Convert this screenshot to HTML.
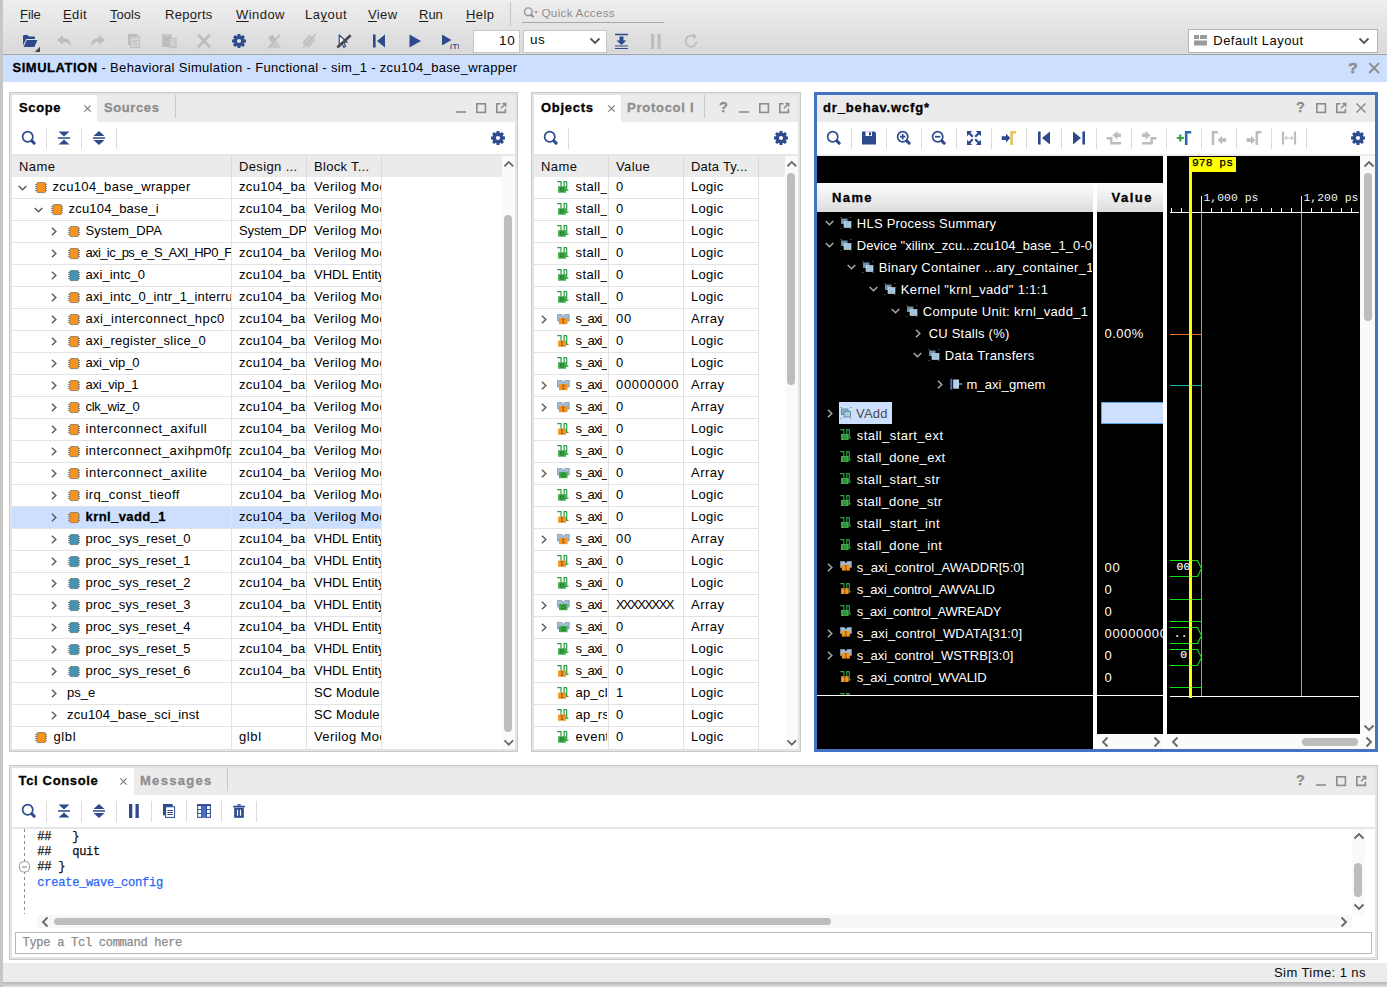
<!DOCTYPE html>
<html><head><meta charset="utf-8"><title>Vivado Simulation</title>
<style>
html,body{margin:0;padding:0;background:#fff}
body{width:1387px;height:987px;position:relative;overflow:hidden;font-family:'Liberation Sans',sans-serif}
div,svg{position:absolute;display:block}
div div,div svg{position:absolute}
u{text-decoration:underline;text-underline-offset:1.500px}
</style></head>
<body>
<svg width="0" height="0" style="left:0;top:0"><defs>
<symbol id="gear" viewBox="0 0 16 16"><path fill="#2c4a8c" fill-rule="evenodd" d="M6.315 3.081L6.589 1.042L9.411 1.042L9.685 3.081L10.287 3.330L11.923 2.082L13.918 4.077L12.670 5.713L12.919 6.315L14.958 6.589L14.958 9.411L12.919 9.685L12.670 10.287L13.918 11.923L11.923 13.918L10.287 12.670L9.685 12.919L9.411 14.958L6.589 14.958L6.315 12.919L5.713 12.670L4.077 13.918L2.082 11.923L3.330 10.287L3.081 9.685L1.042 9.411L1.042 6.589L3.081 6.315L3.330 5.713L2.082 4.077L4.077 2.082L5.713 3.330zM5.900 8a2.100 2.100 0 1 0 4.200 0a2.100 2.100 0 1 0 -4.200 0z"/></symbol>
<symbol id="search" viewBox="0 0 16 16"><circle cx="6.700" cy="6.700" r="5.100" fill="none" stroke="#2c4a8c" stroke-width="1.700"/><path d="M11.100 11.100l2.100 2.100" stroke="#2c4a8c" stroke-width="3" stroke-linecap="round"/></symbol>
<symbol id="collapse" viewBox="0 0 16 16"><path fill="#2c4a8c" d="M2.500 1.500h11L8 6.500zM2 7.300h12v1.500H2zM8 9.600l5.500 5h-11z"/></symbol>
<symbol id="expand" viewBox="0 0 16 16"><path fill="#2c4a8c" d="M8 1l5.500 5h-11zM2 7.300h12v1.500H2zM2.500 10h11L8 15z"/></symbol>
<symbol id="wmin" viewBox="0 0 12 12"><path d="M1 10h10" stroke="#8c8c8c" stroke-width="1.600"/></symbol>
<symbol id="wmax" viewBox="0 0 12 12"><rect x="1.800" y="1.800" width="8.600" height="8.600" fill="none" stroke="#8c8c8c" stroke-width="1.600"/></symbol>
<symbol id="wpop" viewBox="0 0 12 12"><path d="M5.500 1.800H1.800v8.600h8.600V6.800" fill="none" stroke="#8c8c8c" stroke-width="1.600"/><path d="M6 6.200L10.600 1.600M7.400 1.500h3.300v3.300" fill="none" stroke="#8c8c8c" stroke-width="1.500"/></symbol>
<symbol id="wx" viewBox="0 0 12 12"><path d="M1.500 1.500l9 9M10.500 1.500l-9 9" stroke="#8c8c8c" stroke-width="1.500"/></symbol>
<symbol id="tabx" viewBox="0 0 10 10"><path d="M1.500 1.500l7 7M8.500 1.500l-7 7" stroke="#777" stroke-width="1.200"/></symbol>
<symbol id="chR" viewBox="0 0 6 9"><path d="M0.900 0.700L4.800 4.500 0.900 8.300" fill="none" stroke="#5e5e5e" stroke-width="1.500"/></symbol>
<symbol id="chD" viewBox="0 0 9 6"><path d="M0.700 0.900L4.500 4.800 8.300 0.900" fill="none" stroke="#5e5e5e" stroke-width="1.500"/></symbol>
<symbol id="chRw" viewBox="0 0 6 9"><path d="M0.900 0.700L4.800 4.500 0.900 8.300" fill="none" stroke="#a8a8a8" stroke-width="1.500"/></symbol>
<symbol id="chDw" viewBox="0 0 9 6"><path d="M0.700 0.900L4.500 4.800 8.300 0.900" fill="none" stroke="#a8a8a8" stroke-width="1.500"/></symbol>
<symbol id="sbU" viewBox="0 0 12 8"><path d="M1.500 6.500L6 2 10.500 6.500" fill="none" stroke="#6a6a6a" stroke-width="1.900"/></symbol>
<symbol id="sbD" viewBox="0 0 12 8"><path d="M1.500 1.500L6 6 10.500 1.500" fill="none" stroke="#6a6a6a" stroke-width="1.900"/></symbol>
<symbol id="sbL" viewBox="0 0 8 12"><path d="M6.500 1.500L2 6 6.500 10.500" fill="none" stroke="#6a6a6a" stroke-width="1.900"/></symbol>
<symbol id="sbR" viewBox="0 0 8 12"><path d="M1.500 1.500L6 6 1.500 10.500" fill="none" stroke="#6a6a6a" stroke-width="1.900"/></symbol>
<symbol id="modO" viewBox="0 0 12 12"><path d="M0 2.500h12M0 4.500h12M0 6.500h12M0 8.500h12" stroke="#8a8a8a" stroke-width="1" stroke-dasharray="1.800 8.600 1.800"/><rect x="1.900" y="0.600" width="8.600" height="10" rx="1" fill="#f7941e" stroke="#8a7a66" stroke-width="0.900"/></symbol>
<symbol id="modB" viewBox="0 0 12 12"><path d="M0 2.500h12M0 4.500h12M0 6.500h12M0 8.500h12" stroke="#8a8a8a" stroke-width="1" stroke-dasharray="1.800 8.600 1.800"/><rect x="1.900" y="0.600" width="8.600" height="10" rx="1" fill="#3f95b3" stroke="#6a7f88" stroke-width="0.900"/></symbol>
<symbol id="sigO" viewBox="0 0 12 12"><path d="M0.200 0.700H4V6M6.400 0.700H10M7.100 0.700V6M9.700 0.700V9.300H11.500" fill="none" stroke="#2f9e44" stroke-width="1.200"/><rect x="1.100" y="5.200" width="7.900" height="6.500" fill="#3fae49"/><circle cx="4.900" cy="8.600" r="1.700" fill="none" stroke="#2c7a36" stroke-width="1.100"/></symbol>
<symbol id="sigI" viewBox="0 0 12 12"><path d="M0.200 0.700H4V6M6.400 0.700H10M7.100 0.700V6M9.700 0.700V9.300H11.500" fill="none" stroke="#2f9e44" stroke-width="1.200"/><rect x="1.100" y="5.500" width="7.900" height="6.300" fill="#f7941e"/><path d="M3.800 6.800h2.400M5 6.800v3.400M3.800 10.400h2.400" stroke="#8a5a1e" stroke-width="1"/></symbol>
<symbol id="arrI" viewBox="0 0 13 11"><path d="M0.400 0.400H4.600L6.300 2.600 8 0.400H12.200V7H0.400z" fill="#9fc0dc" stroke="#7f8fa0" stroke-width="0.800"/><rect x="2" y="3.900" width="8.500" height="6.300" fill="#f7941e"/><path d="M5.100 5.200h2.400M6.300 5.200v3.400M5.100 8.800h2.400" stroke="#8a5a1e" stroke-width="1"/></symbol>
<symbol id="arrO" viewBox="0 0 13 11"><path d="M0.400 0.400H4.600L6.300 2.600 8 0.400H12.200V7H0.400z" fill="#9fc0dc" stroke="#7f8fa0" stroke-width="0.800"/><rect x="2" y="3.900" width="8.500" height="6.300" fill="#3fae49"/><circle cx="6.300" cy="7.100" r="1.700" fill="none" stroke="#2c7a36" stroke-width="1.100"/></symbol>
<symbol id="grp" viewBox="0 0 12 12"><path d="M0.500 0.500h1M10.500 0.500h1M0.500 11.500h1M10.500 11.500h1" stroke="#777" stroke-width="1"/><rect x="1" y="1.500" width="6.500" height="5.500" fill="#6f8fa6"/><rect x="4" y="4.500" width="7" height="6" fill="#9fc4dc" stroke="#cfe3ef" stroke-width="0.600"/></symbol>
</defs></svg>
<div style="left:0px;top:0px;width:1387px;height:54px;background:linear-gradient(#eeeeee,#e4e4e4 50%,#d9d9d9 96%,#e2dede);"></div>
<div style="left:0px;top:54px;width:1387px;height:1px;background:#a3a3a3;"></div>
<div style="left:20.00px;top:6.00px;font:13px/17px 'Liberation Sans',sans-serif;color:#1c1c1c;letter-spacing:-0.050px;white-space:pre;"><u>F</u>ile</div>
<div style="left:63.00px;top:6.00px;font:13px/17px 'Liberation Sans',sans-serif;color:#1c1c1c;letter-spacing:0.402px;white-space:pre;"><u>E</u>dit</div>
<div style="left:110.00px;top:6.00px;font:13px/17px 'Liberation Sans',sans-serif;color:#1c1c1c;letter-spacing:0.039px;white-space:pre;"><u>T</u>ools</div>
<div style="left:165.00px;top:6.00px;font:13px/17px 'Liberation Sans',sans-serif;color:#1c1c1c;letter-spacing:0.291px;white-space:pre;">Rep<u>o</u>rts</div>
<div style="left:236.00px;top:6.00px;font:13px/17px 'Liberation Sans',sans-serif;color:#1c1c1c;letter-spacing:0.441px;white-space:pre;"><u>W</u>indow</div>
<div style="left:305.00px;top:6.00px;font:13px/17px 'Liberation Sans',sans-serif;color:#1c1c1c;letter-spacing:0.519px;white-space:pre;">La<u>y</u>out</div>
<div style="left:368.00px;top:6.00px;font:13px/17px 'Liberation Sans',sans-serif;color:#1c1c1c;letter-spacing:0.370px;white-space:pre;"><u>V</u>iew</div>
<div style="left:419.00px;top:6.00px;font:13px/17px 'Liberation Sans',sans-serif;color:#1c1c1c;letter-spacing:-0.025px;white-space:pre;"><u>R</u>un</div>
<div style="left:466.00px;top:6.00px;font:13px/17px 'Liberation Sans',sans-serif;color:#1c1c1c;letter-spacing:0.382px;white-space:pre;"><u>H</u>elp</div>
<div style="left:510px;top:2px;width:1px;height:24px;background:#c4c4c4;"></div>
<svg style="left:523px;top:6px;" width="16" height="14" viewBox="0 0 16 14"><circle cx="5.300" cy="5.800" r="3.900" fill="none" stroke="#969696" stroke-width="1.400"/><path d="M8 8.600l2 2" stroke="#8c8c8c" stroke-width="2" stroke-linecap="round"/><path d="M11.300 5.300h3.600l-1.800 2.100z" fill="#8c8c8c"/></svg>
<div style="left:541.50px;top:5.15px;font:11.7px/15px 'Liberation Sans',sans-serif;color:#8f8f8f;letter-spacing:0.274px;white-space:pre;">Quick Access</div>
<div style="left:522px;top:22px;width:142px;height:1px;background:#a8a8a8;"></div>
<svg style="left:21px;top:33px;" width="20" height="19" viewBox="0 0 20 19"><path d="M2 3.300q0-1.300 1.300-1.300h3.200l1.500 1.500h4.700q1.300 0 1.300 1.300V6H5.300L2 12.500z" fill="#2c4a8c"/><path d="M5.800 7H16.400l-3 7H2.600z" fill="#2c4a8c"/><path d="M13.800 19H19v-5.200z" fill="#444"/></svg>
<svg style="left:56px;top:34px;" width="16" height="14" viewBox="0 0 16 14"><path d="M1 6l6-5v3.200c5 0 8 2.500 8 8.500-1.500-3.500-4-4.800-8-4.800V11z" fill="#bdbdbd"/></svg>
<svg style="left:90px;top:34px;" width="16" height="14" viewBox="0 0 16 14"><path d="M15 6L9 1v3.200c-5 0-8 2.500-8 8.500 1.500-3.500 4-4.800 8-4.800V11z" fill="#bdbdbd"/></svg>
<svg style="left:126px;top:33px;" width="16" height="16" viewBox="0 0 16 16"><rect x="2" y="1" width="9.700" height="11.300" fill="#bdbdbd"/><rect x="4.600" y="3.800" width="9" height="10.600" fill="#d6d6d6" stroke="#bdbdbd" stroke-width="1"/><path d="M6.400 7.500h5.500M6.400 9.500h5.500M6.400 11.500h5.500" stroke="#bdbdbd" stroke-width="0.900"/></svg>
<svg style="left:161px;top:33px;" width="16" height="16" viewBox="0 0 16 16"><rect x="1.200" y="1.100" width="9.400" height="12.900" fill="#bdbdbd"/><rect x="3.200" y="1.800" width="5.400" height="1.100" fill="#dadada"/><rect x="8.800" y="5.300" width="6.300" height="9.300" fill="#cfcfcf" stroke="#bdbdbd" stroke-width="1"/></svg>
<svg style="left:196px;top:33px;" width="16" height="16" viewBox="0 0 16 16"><path d="M2 1.600l12 12.600M14 1.600L2 14.200" stroke="#bdbdbd" stroke-width="2.700"/></svg>
<svg style="left:231px;top:33px;" width="16" height="16"><use href="#gear"/></svg>
<svg style="left:266px;top:33px;" width="16" height="16" viewBox="0 0 16 16"><path d="M2 4.500l4.500-3 4 5.500-4.500 3z" fill="#bdbdbd"/><path d="M1.500 15h13.500l-4.200-7.500z" fill="#c9c9c9"/><path d="M2.500 14.800L14 1.800" stroke="#bdbdbd" stroke-width="1.600"/></svg>
<svg style="left:301px;top:33px;" width="16" height="16" viewBox="0 0 16 16"><path d="M2.500 9.500l6-7 5 4.500-6 7z" fill="#d0d0d0" stroke="#bdbdbd" stroke-width="1.200"/><path d="M5 9.500l3.500 3M6.500 7.800l3.500 3M8 6l3.500 3" stroke="#bdbdbd" stroke-width="0.900"/><path d="M2 14.500L14.500 1.500" stroke="#bdbdbd" stroke-width="1.600"/></svg>
<svg style="left:335px;top:33px;" width="18" height="16" viewBox="0 0 18 16"><path d="M4.200 2v10.200l2.600-2.300 2 4.400 1.800-0.800-2-4.300h3.600z" fill="#fff" stroke="#2c4a8c" stroke-width="1.200" stroke-linejoin="round"/><path d="M2.300 14.600L15.700 2.200" stroke="#4a4a4a" stroke-width="2.700"/></svg>
<svg style="left:372px;top:34px;" width="14" height="14" viewBox="0 0 14 14"><rect x="1" y="0.500" width="2.600" height="13" fill="#2c4a8c"/><path d="M13 0.500v13L5 7z" fill="#2c4a8c"/></svg>
<svg style="left:407.5px;top:34px;" width="14" height="14" viewBox="0 0 14 14"><path d="M1.500 0.500L13 7 1.500 13.500z" fill="#2c4a8c"/></svg>
<svg style="left:441px;top:34px;" width="18" height="15" viewBox="0 0 18 15"><path d="M1 0.500L10.500 6 1 11.500z" fill="#2c4a8c"/><text x="9" y="14.500" font-family="Liberation Sans" font-size="7" font-weight="bold" letter-spacing="0.300" fill="#2c4a8c">(T)</text></svg>
<div style="left:473px;top:30px;width:47px;height:23px;background:#fff;border:1px solid #c6c6c6;box-sizing:border-box;"></div>
<div style="left:499.00px;top:32.32px;font:13.5px/18px 'Liberation Sans',sans-serif;color:#0a0a0a;letter-spacing:0.764px;white-space:pre;">10</div>
<div style="left:523px;top:30px;width:84px;height:23px;background:#fff;border:1px solid #c6c6c6;box-sizing:border-box;"></div>
<div style="left:530.00px;top:31.32px;font:13.5px/18px 'Liberation Sans',sans-serif;color:#0a0a0a;letter-spacing:0.378px;white-space:pre;">us</div>
<svg style="left:589px;top:37px;" width="12" height="8" viewBox="0 0 12 8"><path d="M1.500 1.500L6 6 10.500 1.500" fill="none" stroke="#555" stroke-width="1.900"/></svg>
<svg style="left:614px;top:33px;" width="16" height="16" viewBox="0 0 16 16"><path d="M1 1.500h13" stroke="#2c4a8c" stroke-width="1.500"/><path d="M5.500 3.500h4v4h3L7.500 12 2.500 7.500h3z" fill="#2c4a8c"/><path d="M1 13h13M1 15.500h13" stroke="#2c4a8c" stroke-width="1.200"/></svg>
<svg style="left:650px;top:34px;" width="12" height="15" viewBox="0 0 12 15"><rect x="1" y="0" width="3.200" height="15" fill="#bdbdbd"/><rect x="7.500" y="0" width="3.200" height="15" fill="#bdbdbd"/></svg>
<svg style="left:683px;top:33px;" width="16" height="16" viewBox="0 0 16 16"><path d="M13.500 8.500A5.500 5.500 0 1 1 11 3.600" fill="none" stroke="#bdbdbd" stroke-width="1.800"/><path d="M9.500 0.500l4.500 2.500-3.500 3.500z" fill="#bdbdbd"/></svg>
<div style="left:1188px;top:29px;width:190px;height:24px;background:#fff;border:1px solid #b4b4b4;box-sizing:border-box;"></div>
<svg style="left:1194px;top:35px;" width="14" height="12" viewBox="0 0 14 12"><rect x="0" y="0" width="5" height="4" fill="#9a9a9a"/><rect x="6" y="0" width="7" height="4" fill="#9a9a9a"/><rect x="0" y="5.500" width="13" height="5" fill="#9a9a9a"/></svg>
<div style="left:1213.30px;top:32.00px;font:13px/17px 'Liberation Sans',sans-serif;color:#0a0a0a;letter-spacing:0.462px;white-space:pre;">Default Layout</div>
<svg style="left:1358px;top:37px;" width="12" height="8" viewBox="0 0 12 8"><path d="M1.500 1.500L6 6 10.500 1.500" fill="none" stroke="#555" stroke-width="1.900"/></svg>
<div style="left:0px;top:55px;width:1387px;height:27px;background:#cddffe;"></div>
<div style="left:12.50px;top:59.00px;font:bold 13px/17px 'Liberation Sans',sans-serif;color:#000;letter-spacing:0.516px;white-space:pre;-webkit-text-stroke:0.300px currentColor;">SIMULATION</div>
<div style="left:101.50px;top:59.00px;font:13px/17px 'Liberation Sans',sans-serif;color:#000;letter-spacing:0.325px;white-space:pre;">- Behavioral Simulation - Functional - sim_1 - zcu104_base_wrapper</div>
<div style="left:1348.30px;top:57.63px;font:bold 15.5px/20px 'Liberation Sans',sans-serif;color:#8c8c8c;letter-spacing:1.531px;white-space:pre;-webkit-text-stroke:0.500px currentColor;">?</div>
<svg style="left:1368px;top:62px;" width="12" height="12" viewBox="0 0 12 12"><path d="M1.200 1.200l9.800 9.800M11 1.200L1.200 11" stroke="#8c8c8c" stroke-width="1.900"/></svg>
<div style="left:9px;top:92px;width:509px;height:660px;background:#c9c9c9;"></div>
<div style="left:10px;top:93px;width:507px;height:658px;background:#e4e4e4;"></div>
<div style="left:12px;top:95px;width:503px;height:654px;background:#fff;"></div>
<div style="left:12px;top:95px;width:503px;height:27px;background:#ebebeb;"></div>
<div style="left:12px;top:95px;width:85px;height:27px;background:#fff;"></div>
<div style="left:19.00px;top:99.00px;font:bold 13px/17px 'Liberation Sans',sans-serif;color:#000;letter-spacing:0.613px;white-space:pre;-webkit-text-stroke:0.300px currentColor;">Scope</div>
<svg style="left:82.5px;top:104.2px;" width="9" height="9"><use href="#tabx"/></svg>
<div style="left:104.00px;top:99.00px;font:bold 13px/17px 'Liberation Sans',sans-serif;color:#8e8e8e;letter-spacing:0.603px;white-space:pre;-webkit-text-stroke:0.300px currentColor;">Sources</div>
<div style="left:175px;top:95px;width:1px;height:23px;background:#c9c9c9;"></div>
<svg style="left:455px;top:102px;" width="12" height="12"><use href="#wmin"/></svg>
<svg style="left:475px;top:102px;" width="12" height="12"><use href="#wmax"/></svg>
<svg style="left:495px;top:102px;" width="12" height="12"><use href="#wpop"/></svg>
<svg style="left:21px;top:130px;" width="16" height="16"><use href="#search"/></svg>
<svg style="left:56px;top:130px;" width="16" height="16"><use href="#collapse"/></svg>
<svg style="left:91px;top:130px;" width="16" height="16"><use href="#expand"/></svg>
<div style="left:46px;top:128px;width:1px;height:21px;background:#dcdcdc;"></div>
<div style="left:81px;top:128px;width:1px;height:21px;background:#dcdcdc;"></div>
<div style="left:116px;top:128px;width:1px;height:21px;background:#dcdcdc;"></div>
<svg style="left:490px;top:130px;" width="16" height="16"><use href="#gear"/></svg>
<div style="left:12px;top:154px;width:490px;height:23px;background:#ebebeb;"></div>
<div style="left:231px;top:154px;width:1px;height:23px;background:#dadada;"></div>
<div style="left:306px;top:154px;width:1px;height:23px;background:#dadada;"></div>
<div style="left:381px;top:154px;width:1px;height:23px;background:#dadada;"></div>
<div style="left:19.00px;top:158.00px;font:13px/17px 'Liberation Sans',sans-serif;color:#0a0a0a;letter-spacing:0.475px;white-space:pre;">Name</div>
<div style="left:239.00px;top:158.00px;font:13px/17px 'Liberation Sans',sans-serif;color:#0a0a0a;letter-spacing:0.366px;white-space:pre;">Design ...</div>
<div style="left:314.00px;top:158.00px;font:13px/17px 'Liberation Sans',sans-serif;color:#0a0a0a;letter-spacing:0.290px;white-space:pre;">Block T...</div>
<div style="left:12px;top:198px;width:370px;height:1px;background:#e3e3e3;"></div>
<svg style="left:17.5px;top:184.8px;" width="9" height="6"><use href="#chD"/></svg>
<svg style="left:35px;top:181.5px;" width="12" height="12"><use href="#modO"/></svg>
<div style="left:52.50px;top:178.00px;font:13px/17px 'Liberation Sans',sans-serif;color:#000;letter-spacing:0.345px;white-space:pre;width:178.00px;overflow:hidden;">zcu104_base_wrapper</div>
<div style="left:239.00px;top:178.00px;font:13px/17px 'Liberation Sans',sans-serif;color:#000;letter-spacing:0.321px;white-space:pre;width:66.50px;overflow:hidden;">zcu104_ba</div>
<div style="left:314.00px;top:178.00px;font:13px/17px 'Liberation Sans',sans-serif;color:#000;letter-spacing:0.401px;white-space:pre;width:66.50px;overflow:hidden;">Verilog Module</div>
<div style="left:12px;top:220px;width:370px;height:1px;background:#e3e3e3;"></div>
<svg style="left:33.5px;top:206.8px;" width="9" height="6"><use href="#chD"/></svg>
<svg style="left:51px;top:203.5px;" width="12" height="12"><use href="#modO"/></svg>
<div style="left:68.50px;top:200.00px;font:13px/17px 'Liberation Sans',sans-serif;color:#000;letter-spacing:0.214px;white-space:pre;width:162.00px;overflow:hidden;">zcu104_base_i</div>
<div style="left:239.00px;top:200.00px;font:13px/17px 'Liberation Sans',sans-serif;color:#000;letter-spacing:0.321px;white-space:pre;width:66.50px;overflow:hidden;">zcu104_ba</div>
<div style="left:314.00px;top:200.00px;font:13px/17px 'Liberation Sans',sans-serif;color:#000;letter-spacing:0.401px;white-space:pre;width:66.50px;overflow:hidden;">Verilog Module</div>
<div style="left:12px;top:242px;width:370px;height:1px;background:#e3e3e3;"></div>
<svg style="left:51.2px;top:226.8px;" width="6" height="9"><use href="#chR"/></svg>
<svg style="left:67.5px;top:225.5px;" width="12" height="12"><use href="#modO"/></svg>
<div style="left:85.50px;top:222.00px;font:13px/17px 'Liberation Sans',sans-serif;color:#000;letter-spacing:0.016px;white-space:pre;width:145.00px;overflow:hidden;">System_DPA</div>
<div style="left:239.00px;top:222.00px;font:13px/17px 'Liberation Sans',sans-serif;color:#000;letter-spacing:-0.084px;white-space:pre;width:66.50px;overflow:hidden;">System_DPA</div>
<div style="left:314.00px;top:222.00px;font:13px/17px 'Liberation Sans',sans-serif;color:#000;letter-spacing:0.401px;white-space:pre;width:66.50px;overflow:hidden;">Verilog Module</div>
<div style="left:12px;top:264px;width:370px;height:1px;background:#e3e3e3;"></div>
<svg style="left:51.2px;top:248.8px;" width="6" height="9"><use href="#chR"/></svg>
<svg style="left:67.5px;top:247.5px;" width="12" height="12"><use href="#modO"/></svg>
<div style="left:85.50px;top:244.00px;font:13px/17px 'Liberation Sans',sans-serif;color:#000;letter-spacing:-0.620px;white-space:pre;width:145.00px;overflow:hidden;">axi_ic_ps_e_S_AXI_HP0_FPD</div>
<div style="left:239.00px;top:244.00px;font:13px/17px 'Liberation Sans',sans-serif;color:#000;letter-spacing:0.321px;white-space:pre;width:66.50px;overflow:hidden;">zcu104_ba</div>
<div style="left:314.00px;top:244.00px;font:13px/17px 'Liberation Sans',sans-serif;color:#000;letter-spacing:0.401px;white-space:pre;width:66.50px;overflow:hidden;">Verilog Module</div>
<div style="left:12px;top:286px;width:370px;height:1px;background:#e3e3e3;"></div>
<svg style="left:51.2px;top:270.8px;" width="6" height="9"><use href="#chR"/></svg>
<svg style="left:67.5px;top:269.5px;" width="12" height="12"><use href="#modB"/></svg>
<div style="left:85.50px;top:266.00px;font:13px/17px 'Liberation Sans',sans-serif;color:#000;letter-spacing:0.116px;white-space:pre;width:145.00px;overflow:hidden;">axi_intc_0</div>
<div style="left:239.00px;top:266.00px;font:13px/17px 'Liberation Sans',sans-serif;color:#000;letter-spacing:0.321px;white-space:pre;width:66.50px;overflow:hidden;">zcu104_ba</div>
<div style="left:314.00px;top:266.00px;font:13px/17px 'Liberation Sans',sans-serif;color:#000;letter-spacing:0.016px;white-space:pre;width:66.50px;overflow:hidden;">VHDL Entity</div>
<div style="left:12px;top:308px;width:370px;height:1px;background:#e3e3e3;"></div>
<svg style="left:51.2px;top:292.8px;" width="6" height="9"><use href="#chR"/></svg>
<svg style="left:67.5px;top:291.5px;" width="12" height="12"><use href="#modO"/></svg>
<div style="left:85.50px;top:288.00px;font:13px/17px 'Liberation Sans',sans-serif;color:#000;letter-spacing:0.193px;white-space:pre;width:145.00px;overflow:hidden;">axi_intc_0_intr_1_interrupt_concat</div>
<div style="left:239.00px;top:288.00px;font:13px/17px 'Liberation Sans',sans-serif;color:#000;letter-spacing:0.321px;white-space:pre;width:66.50px;overflow:hidden;">zcu104_ba</div>
<div style="left:314.00px;top:288.00px;font:13px/17px 'Liberation Sans',sans-serif;color:#000;letter-spacing:0.401px;white-space:pre;width:66.50px;overflow:hidden;">Verilog Module</div>
<div style="left:12px;top:330px;width:370px;height:1px;background:#e3e3e3;"></div>
<svg style="left:51.2px;top:314.8px;" width="6" height="9"><use href="#chR"/></svg>
<svg style="left:67.5px;top:313.5px;" width="12" height="12"><use href="#modO"/></svg>
<div style="left:85.50px;top:310.00px;font:13px/17px 'Liberation Sans',sans-serif;color:#000;letter-spacing:0.436px;white-space:pre;width:145.00px;overflow:hidden;">axi_interconnect_hpc0</div>
<div style="left:239.00px;top:310.00px;font:13px/17px 'Liberation Sans',sans-serif;color:#000;letter-spacing:0.321px;white-space:pre;width:66.50px;overflow:hidden;">zcu104_ba</div>
<div style="left:314.00px;top:310.00px;font:13px/17px 'Liberation Sans',sans-serif;color:#000;letter-spacing:0.401px;white-space:pre;width:66.50px;overflow:hidden;">Verilog Module</div>
<div style="left:12px;top:352px;width:370px;height:1px;background:#e3e3e3;"></div>
<svg style="left:51.2px;top:336.8px;" width="6" height="9"><use href="#chR"/></svg>
<svg style="left:67.5px;top:335.5px;" width="12" height="12"><use href="#modO"/></svg>
<div style="left:85.50px;top:332.00px;font:13px/17px 'Liberation Sans',sans-serif;color:#000;letter-spacing:0.279px;white-space:pre;width:145.00px;overflow:hidden;">axi_register_slice_0</div>
<div style="left:239.00px;top:332.00px;font:13px/17px 'Liberation Sans',sans-serif;color:#000;letter-spacing:0.321px;white-space:pre;width:66.50px;overflow:hidden;">zcu104_ba</div>
<div style="left:314.00px;top:332.00px;font:13px/17px 'Liberation Sans',sans-serif;color:#000;letter-spacing:0.401px;white-space:pre;width:66.50px;overflow:hidden;">Verilog Module</div>
<div style="left:12px;top:374px;width:370px;height:1px;background:#e3e3e3;"></div>
<svg style="left:51.2px;top:358.8px;" width="6" height="9"><use href="#chR"/></svg>
<svg style="left:67.5px;top:357.5px;" width="12" height="12"><use href="#modO"/></svg>
<div style="left:85.50px;top:354.00px;font:13px/17px 'Liberation Sans',sans-serif;color:#000;letter-spacing:-0.103px;white-space:pre;width:145.00px;overflow:hidden;">axi_vip_0</div>
<div style="left:239.00px;top:354.00px;font:13px/17px 'Liberation Sans',sans-serif;color:#000;letter-spacing:0.321px;white-space:pre;width:66.50px;overflow:hidden;">zcu104_ba</div>
<div style="left:314.00px;top:354.00px;font:13px/17px 'Liberation Sans',sans-serif;color:#000;letter-spacing:0.401px;white-space:pre;width:66.50px;overflow:hidden;">Verilog Module</div>
<div style="left:12px;top:396px;width:370px;height:1px;background:#e3e3e3;"></div>
<svg style="left:51.2px;top:380.8px;" width="6" height="9"><use href="#chR"/></svg>
<svg style="left:67.5px;top:379.5px;" width="12" height="12"><use href="#modO"/></svg>
<div style="left:85.50px;top:376.00px;font:13px/17px 'Liberation Sans',sans-serif;color:#000;letter-spacing:-0.248px;white-space:pre;width:145.00px;overflow:hidden;">axi_vip_1</div>
<div style="left:239.00px;top:376.00px;font:13px/17px 'Liberation Sans',sans-serif;color:#000;letter-spacing:0.321px;white-space:pre;width:66.50px;overflow:hidden;">zcu104_ba</div>
<div style="left:314.00px;top:376.00px;font:13px/17px 'Liberation Sans',sans-serif;color:#000;letter-spacing:0.401px;white-space:pre;width:66.50px;overflow:hidden;">Verilog Module</div>
<div style="left:12px;top:418px;width:370px;height:1px;background:#e3e3e3;"></div>
<svg style="left:51.2px;top:402.8px;" width="6" height="9"><use href="#chR"/></svg>
<svg style="left:67.5px;top:401.5px;" width="12" height="12"><use href="#modO"/></svg>
<div style="left:85.50px;top:398.00px;font:13px/17px 'Liberation Sans',sans-serif;color:#000;letter-spacing:-0.262px;white-space:pre;width:145.00px;overflow:hidden;">clk_wiz_0</div>
<div style="left:239.00px;top:398.00px;font:13px/17px 'Liberation Sans',sans-serif;color:#000;letter-spacing:0.321px;white-space:pre;width:66.50px;overflow:hidden;">zcu104_ba</div>
<div style="left:314.00px;top:398.00px;font:13px/17px 'Liberation Sans',sans-serif;color:#000;letter-spacing:0.401px;white-space:pre;width:66.50px;overflow:hidden;">Verilog Module</div>
<div style="left:12px;top:440px;width:370px;height:1px;background:#e3e3e3;"></div>
<svg style="left:51.2px;top:424.8px;" width="6" height="9"><use href="#chR"/></svg>
<svg style="left:67.5px;top:423.5px;" width="12" height="12"><use href="#modO"/></svg>
<div style="left:85.50px;top:420.00px;font:13px/17px 'Liberation Sans',sans-serif;color:#000;letter-spacing:0.522px;white-space:pre;width:145.00px;overflow:hidden;">interconnect_axifull</div>
<div style="left:239.00px;top:420.00px;font:13px/17px 'Liberation Sans',sans-serif;color:#000;letter-spacing:0.321px;white-space:pre;width:66.50px;overflow:hidden;">zcu104_ba</div>
<div style="left:314.00px;top:420.00px;font:13px/17px 'Liberation Sans',sans-serif;color:#000;letter-spacing:0.401px;white-space:pre;width:66.50px;overflow:hidden;">Verilog Module</div>
<div style="left:12px;top:462px;width:370px;height:1px;background:#e3e3e3;"></div>
<svg style="left:51.2px;top:446.8px;" width="6" height="9"><use href="#chR"/></svg>
<svg style="left:67.5px;top:445.5px;" width="12" height="12"><use href="#modO"/></svg>
<div style="left:85.50px;top:442.00px;font:13px/17px 'Liberation Sans',sans-serif;color:#000;letter-spacing:0.467px;white-space:pre;width:145.00px;overflow:hidden;">interconnect_axihpm0fpd</div>
<div style="left:239.00px;top:442.00px;font:13px/17px 'Liberation Sans',sans-serif;color:#000;letter-spacing:0.321px;white-space:pre;width:66.50px;overflow:hidden;">zcu104_ba</div>
<div style="left:314.00px;top:442.00px;font:13px/17px 'Liberation Sans',sans-serif;color:#000;letter-spacing:0.401px;white-space:pre;width:66.50px;overflow:hidden;">Verilog Module</div>
<div style="left:12px;top:484px;width:370px;height:1px;background:#e3e3e3;"></div>
<svg style="left:51.2px;top:468.8px;" width="6" height="9"><use href="#chR"/></svg>
<svg style="left:67.5px;top:467.5px;" width="12" height="12"><use href="#modO"/></svg>
<div style="left:85.50px;top:464.00px;font:13px/17px 'Liberation Sans',sans-serif;color:#000;letter-spacing:0.536px;white-space:pre;width:145.00px;overflow:hidden;">interconnect_axilite</div>
<div style="left:239.00px;top:464.00px;font:13px/17px 'Liberation Sans',sans-serif;color:#000;letter-spacing:0.321px;white-space:pre;width:66.50px;overflow:hidden;">zcu104_ba</div>
<div style="left:314.00px;top:464.00px;font:13px/17px 'Liberation Sans',sans-serif;color:#000;letter-spacing:0.401px;white-space:pre;width:66.50px;overflow:hidden;">Verilog Module</div>
<div style="left:12px;top:506px;width:370px;height:1px;background:#e3e3e3;"></div>
<svg style="left:51.2px;top:490.8px;" width="6" height="9"><use href="#chR"/></svg>
<svg style="left:67.5px;top:489.5px;" width="12" height="12"><use href="#modO"/></svg>
<div style="left:85.50px;top:486.00px;font:13px/17px 'Liberation Sans',sans-serif;color:#000;letter-spacing:0.394px;white-space:pre;width:145.00px;overflow:hidden;">irq_const_tieoff</div>
<div style="left:239.00px;top:486.00px;font:13px/17px 'Liberation Sans',sans-serif;color:#000;letter-spacing:0.321px;white-space:pre;width:66.50px;overflow:hidden;">zcu104_ba</div>
<div style="left:314.00px;top:486.00px;font:13px/17px 'Liberation Sans',sans-serif;color:#000;letter-spacing:0.401px;white-space:pre;width:66.50px;overflow:hidden;">Verilog Module</div>
<div style="left:12px;top:507px;width:369px;height:21px;background:#cddffe;"></div>
<div style="left:12px;top:528px;width:370px;height:1px;background:#e3e3e3;"></div>
<svg style="left:51.2px;top:512.8px;" width="6" height="9"><use href="#chR"/></svg>
<svg style="left:67.5px;top:511.5px;" width="12" height="12"><use href="#modO"/></svg>
<div style="left:85.50px;top:508.00px;font:bold 13px/17px 'Liberation Sans',sans-serif;color:#000;letter-spacing:0.420px;white-space:pre;width:145.00px;overflow:hidden;-webkit-text-stroke:0.300px currentColor;">krnl_vadd_1</div>
<div style="left:239.00px;top:508.00px;font:13px/17px 'Liberation Sans',sans-serif;color:#000;letter-spacing:0.321px;white-space:pre;width:66.50px;overflow:hidden;">zcu104_ba</div>
<div style="left:314.00px;top:508.00px;font:13px/17px 'Liberation Sans',sans-serif;color:#000;letter-spacing:0.401px;white-space:pre;width:66.50px;overflow:hidden;">Verilog Module</div>
<div style="left:12px;top:550px;width:370px;height:1px;background:#e3e3e3;"></div>
<svg style="left:51.2px;top:534.8px;" width="6" height="9"><use href="#chR"/></svg>
<svg style="left:67.5px;top:533.5px;" width="12" height="12"><use href="#modB"/></svg>
<div style="left:85.50px;top:530.00px;font:13px/17px 'Liberation Sans',sans-serif;color:#000;letter-spacing:0.164px;white-space:pre;width:145.00px;overflow:hidden;">proc_sys_reset_0</div>
<div style="left:239.00px;top:530.00px;font:13px/17px 'Liberation Sans',sans-serif;color:#000;letter-spacing:0.321px;white-space:pre;width:66.50px;overflow:hidden;">zcu104_ba</div>
<div style="left:314.00px;top:530.00px;font:13px/17px 'Liberation Sans',sans-serif;color:#000;letter-spacing:0.016px;white-space:pre;width:66.50px;overflow:hidden;">VHDL Entity</div>
<div style="left:12px;top:572px;width:370px;height:1px;background:#e3e3e3;"></div>
<svg style="left:51.2px;top:556.8px;" width="6" height="9"><use href="#chR"/></svg>
<svg style="left:67.5px;top:555.5px;" width="12" height="12"><use href="#modB"/></svg>
<div style="left:85.50px;top:552.00px;font:13px/17px 'Liberation Sans',sans-serif;color:#000;letter-spacing:0.164px;white-space:pre;width:145.00px;overflow:hidden;">proc_sys_reset_1</div>
<div style="left:239.00px;top:552.00px;font:13px/17px 'Liberation Sans',sans-serif;color:#000;letter-spacing:0.321px;white-space:pre;width:66.50px;overflow:hidden;">zcu104_ba</div>
<div style="left:314.00px;top:552.00px;font:13px/17px 'Liberation Sans',sans-serif;color:#000;letter-spacing:0.016px;white-space:pre;width:66.50px;overflow:hidden;">VHDL Entity</div>
<div style="left:12px;top:594px;width:370px;height:1px;background:#e3e3e3;"></div>
<svg style="left:51.2px;top:578.8px;" width="6" height="9"><use href="#chR"/></svg>
<svg style="left:67.5px;top:577.5px;" width="12" height="12"><use href="#modB"/></svg>
<div style="left:85.50px;top:574.00px;font:13px/17px 'Liberation Sans',sans-serif;color:#000;letter-spacing:0.164px;white-space:pre;width:145.00px;overflow:hidden;">proc_sys_reset_2</div>
<div style="left:239.00px;top:574.00px;font:13px/17px 'Liberation Sans',sans-serif;color:#000;letter-spacing:0.321px;white-space:pre;width:66.50px;overflow:hidden;">zcu104_ba</div>
<div style="left:314.00px;top:574.00px;font:13px/17px 'Liberation Sans',sans-serif;color:#000;letter-spacing:0.016px;white-space:pre;width:66.50px;overflow:hidden;">VHDL Entity</div>
<div style="left:12px;top:616px;width:370px;height:1px;background:#e3e3e3;"></div>
<svg style="left:51.2px;top:600.8px;" width="6" height="9"><use href="#chR"/></svg>
<svg style="left:67.5px;top:599.5px;" width="12" height="12"><use href="#modB"/></svg>
<div style="left:85.50px;top:596.00px;font:13px/17px 'Liberation Sans',sans-serif;color:#000;letter-spacing:0.164px;white-space:pre;width:145.00px;overflow:hidden;">proc_sys_reset_3</div>
<div style="left:239.00px;top:596.00px;font:13px/17px 'Liberation Sans',sans-serif;color:#000;letter-spacing:0.321px;white-space:pre;width:66.50px;overflow:hidden;">zcu104_ba</div>
<div style="left:314.00px;top:596.00px;font:13px/17px 'Liberation Sans',sans-serif;color:#000;letter-spacing:0.016px;white-space:pre;width:66.50px;overflow:hidden;">VHDL Entity</div>
<div style="left:12px;top:638px;width:370px;height:1px;background:#e3e3e3;"></div>
<svg style="left:51.2px;top:622.8px;" width="6" height="9"><use href="#chR"/></svg>
<svg style="left:67.5px;top:621.5px;" width="12" height="12"><use href="#modB"/></svg>
<div style="left:85.50px;top:618.00px;font:13px/17px 'Liberation Sans',sans-serif;color:#000;letter-spacing:0.164px;white-space:pre;width:145.00px;overflow:hidden;">proc_sys_reset_4</div>
<div style="left:239.00px;top:618.00px;font:13px/17px 'Liberation Sans',sans-serif;color:#000;letter-spacing:0.321px;white-space:pre;width:66.50px;overflow:hidden;">zcu104_ba</div>
<div style="left:314.00px;top:618.00px;font:13px/17px 'Liberation Sans',sans-serif;color:#000;letter-spacing:0.016px;white-space:pre;width:66.50px;overflow:hidden;">VHDL Entity</div>
<div style="left:12px;top:660px;width:370px;height:1px;background:#e3e3e3;"></div>
<svg style="left:51.2px;top:644.8px;" width="6" height="9"><use href="#chR"/></svg>
<svg style="left:67.5px;top:643.5px;" width="12" height="12"><use href="#modB"/></svg>
<div style="left:85.50px;top:640.00px;font:13px/17px 'Liberation Sans',sans-serif;color:#000;letter-spacing:0.164px;white-space:pre;width:145.00px;overflow:hidden;">proc_sys_reset_5</div>
<div style="left:239.00px;top:640.00px;font:13px/17px 'Liberation Sans',sans-serif;color:#000;letter-spacing:0.321px;white-space:pre;width:66.50px;overflow:hidden;">zcu104_ba</div>
<div style="left:314.00px;top:640.00px;font:13px/17px 'Liberation Sans',sans-serif;color:#000;letter-spacing:0.016px;white-space:pre;width:66.50px;overflow:hidden;">VHDL Entity</div>
<div style="left:12px;top:682px;width:370px;height:1px;background:#e3e3e3;"></div>
<svg style="left:51.2px;top:666.8px;" width="6" height="9"><use href="#chR"/></svg>
<svg style="left:67.5px;top:665.5px;" width="12" height="12"><use href="#modB"/></svg>
<div style="left:85.50px;top:662.00px;font:13px/17px 'Liberation Sans',sans-serif;color:#000;letter-spacing:0.164px;white-space:pre;width:145.00px;overflow:hidden;">proc_sys_reset_6</div>
<div style="left:239.00px;top:662.00px;font:13px/17px 'Liberation Sans',sans-serif;color:#000;letter-spacing:0.321px;white-space:pre;width:66.50px;overflow:hidden;">zcu104_ba</div>
<div style="left:314.00px;top:662.00px;font:13px/17px 'Liberation Sans',sans-serif;color:#000;letter-spacing:0.016px;white-space:pre;width:66.50px;overflow:hidden;">VHDL Entity</div>
<div style="left:12px;top:704px;width:370px;height:1px;background:#e3e3e3;"></div>
<svg style="left:51.2px;top:688.8px;" width="6" height="9"><use href="#chR"/></svg>
<div style="left:67.00px;top:684.00px;font:13px/17px 'Liberation Sans',sans-serif;color:#000;letter-spacing:-0.009px;white-space:pre;width:163.50px;overflow:hidden;">ps_e</div>
<div style="left:314.00px;top:684.00px;font:13px/17px 'Liberation Sans',sans-serif;color:#000;letter-spacing:0.138px;white-space:pre;width:66.50px;overflow:hidden;">SC Module</div>
<div style="left:12px;top:726px;width:370px;height:1px;background:#e3e3e3;"></div>
<svg style="left:51.2px;top:710.8px;" width="6" height="9"><use href="#chR"/></svg>
<div style="left:67.00px;top:706.00px;font:13px/17px 'Liberation Sans',sans-serif;color:#000;letter-spacing:0.221px;white-space:pre;width:163.50px;overflow:hidden;">zcu104_base_sci_inst</div>
<div style="left:314.00px;top:706.00px;font:13px/17px 'Liberation Sans',sans-serif;color:#000;letter-spacing:0.138px;white-space:pre;width:66.50px;overflow:hidden;">SC Module</div>
<svg style="left:35px;top:731.5px;" width="12" height="12"><use href="#modO"/></svg>
<div style="left:53.50px;top:728.00px;font:13px/17px 'Liberation Sans',sans-serif;color:#000;letter-spacing:0.598px;white-space:pre;width:177.00px;overflow:hidden;">glbl</div>
<div style="left:239.00px;top:728.00px;font:13px/17px 'Liberation Sans',sans-serif;color:#000;letter-spacing:0.598px;white-space:pre;width:66.50px;overflow:hidden;">glbl</div>
<div style="left:314.00px;top:728.00px;font:13px/17px 'Liberation Sans',sans-serif;color:#000;letter-spacing:0.401px;white-space:pre;width:66.50px;overflow:hidden;">Verilog Module</div>
<div style="left:231px;top:177px;width:1px;height:572px;background:#e3e3e3;"></div>
<div style="left:306px;top:177px;width:1px;height:572px;background:#e3e3e3;"></div>
<div style="left:381px;top:177px;width:1px;height:572px;background:#e3e3e3;"></div>
<div style="left:502px;top:155px;width:13px;height:594px;background:#fafafa;"></div>
<svg style="left:502.7px;top:160.3px;" width="11.6" height="7.7"><use href="#sbU"/></svg>
<svg style="left:502.7px;top:739.3px;" width="11.6" height="7.7"><use href="#sbD"/></svg>
<div style="left:504px;top:215px;width:8px;height:517px;background:#bdbdbd;border-radius:4px;"></div>
<div style="left:12px;top:154px;width:503px;height:2px;background:#e6e6e6;"></div>
<div style="left:531px;top:92px;width:270px;height:660px;background:#c9c9c9;"></div>
<div style="left:532px;top:93px;width:268px;height:658px;background:#e4e4e4;"></div>
<div style="left:534px;top:95px;width:264px;height:654px;background:#fff;"></div>
<div style="left:534px;top:95px;width:264px;height:27px;background:#ebebeb;"></div>
<div style="left:534px;top:95px;width:87px;height:27px;background:#fff;"></div>
<div style="left:541.00px;top:99.00px;font:bold 13px/17px 'Liberation Sans',sans-serif;color:#000;letter-spacing:0.720px;white-space:pre;-webkit-text-stroke:0.300px currentColor;">Objects</div>
<svg style="left:606.5px;top:104.2px;" width="9" height="9"><use href="#tabx"/></svg>
<div style="left:627.00px;top:99.00px;font:bold 13px/17px 'Liberation Sans',sans-serif;color:#8e8e8e;letter-spacing:0.742px;white-space:pre;width:67.00px;overflow:hidden;-webkit-text-stroke:0.300px currentColor;">Protocol Instances</div>
<div style="left:704px;top:95px;width:1px;height:23px;background:#c9c9c9;"></div>
<div style="left:719.00px;top:98.48px;font:bold 14.5px/19px 'Liberation Sans',sans-serif;color:#8c8c8c;letter-spacing:0.643px;white-space:pre;-webkit-text-stroke:0.300px currentColor;">?</div>
<svg style="left:738px;top:102px;" width="12" height="12"><use href="#wmin"/></svg>
<svg style="left:758px;top:102px;" width="12" height="12"><use href="#wmax"/></svg>
<svg style="left:778px;top:102px;" width="12" height="12"><use href="#wpop"/></svg>
<svg style="left:543px;top:130px;" width="16" height="16"><use href="#search"/></svg>
<div style="left:568px;top:128px;width:1px;height:21px;background:#dcdcdc;"></div>
<svg style="left:773px;top:130px;" width="16" height="16"><use href="#gear"/></svg>
<div style="left:534px;top:154px;width:251px;height:23px;background:#ebebeb;"></div>
<div style="left:608px;top:154px;width:1px;height:23px;background:#dadada;"></div>
<div style="left:683px;top:154px;width:1px;height:23px;background:#dadada;"></div>
<div style="left:758px;top:154px;width:1px;height:23px;background:#dadada;"></div>
<div style="left:541.00px;top:158.00px;font:13px/17px 'Liberation Sans',sans-serif;color:#0a0a0a;letter-spacing:0.475px;white-space:pre;">Name</div>
<div style="left:616.00px;top:158.00px;font:13px/17px 'Liberation Sans',sans-serif;color:#0a0a0a;letter-spacing:0.352px;white-space:pre;">Value</div>
<div style="left:691.00px;top:158.00px;font:13px/17px 'Liberation Sans',sans-serif;color:#0a0a0a;letter-spacing:0.215px;white-space:pre;">Data Ty...</div>
<div style="left:534px;top:198px;width:225px;height:1px;background:#e3e3e3;"></div>
<svg style="left:557px;top:181.2px;" width="12" height="12"><use href="#sigO"/></svg>
<div style="left:575.60px;top:178.00px;font:13px/17px 'Liberation Sans',sans-serif;color:#000;letter-spacing:0.342px;white-space:pre;width:31.90px;overflow:hidden;">stall_</div>
<div style="left:616.00px;top:178.00px;font:13px/17px 'Liberation Sans',sans-serif;color:#000;letter-spacing:0.658px;white-space:pre;">0</div>
<div style="left:691.00px;top:178.00px;font:13px/17px 'Liberation Sans',sans-serif;color:#000;letter-spacing:0.265px;white-space:pre;">Logic</div>
<div style="left:534px;top:220px;width:225px;height:1px;background:#e3e3e3;"></div>
<svg style="left:557px;top:203.2px;" width="12" height="12"><use href="#sigO"/></svg>
<div style="left:575.60px;top:200.00px;font:13px/17px 'Liberation Sans',sans-serif;color:#000;letter-spacing:0.342px;white-space:pre;width:31.90px;overflow:hidden;">stall_</div>
<div style="left:616.00px;top:200.00px;font:13px/17px 'Liberation Sans',sans-serif;color:#000;letter-spacing:0.658px;white-space:pre;">0</div>
<div style="left:691.00px;top:200.00px;font:13px/17px 'Liberation Sans',sans-serif;color:#000;letter-spacing:0.265px;white-space:pre;">Logic</div>
<div style="left:534px;top:242px;width:225px;height:1px;background:#e3e3e3;"></div>
<svg style="left:557px;top:225.2px;" width="12" height="12"><use href="#sigO"/></svg>
<div style="left:575.60px;top:222.00px;font:13px/17px 'Liberation Sans',sans-serif;color:#000;letter-spacing:0.342px;white-space:pre;width:31.90px;overflow:hidden;">stall_</div>
<div style="left:616.00px;top:222.00px;font:13px/17px 'Liberation Sans',sans-serif;color:#000;letter-spacing:0.658px;white-space:pre;">0</div>
<div style="left:691.00px;top:222.00px;font:13px/17px 'Liberation Sans',sans-serif;color:#000;letter-spacing:0.265px;white-space:pre;">Logic</div>
<div style="left:534px;top:264px;width:225px;height:1px;background:#e3e3e3;"></div>
<svg style="left:557px;top:247.2px;" width="12" height="12"><use href="#sigO"/></svg>
<div style="left:575.60px;top:244.00px;font:13px/17px 'Liberation Sans',sans-serif;color:#000;letter-spacing:0.342px;white-space:pre;width:31.90px;overflow:hidden;">stall_</div>
<div style="left:616.00px;top:244.00px;font:13px/17px 'Liberation Sans',sans-serif;color:#000;letter-spacing:0.658px;white-space:pre;">0</div>
<div style="left:691.00px;top:244.00px;font:13px/17px 'Liberation Sans',sans-serif;color:#000;letter-spacing:0.265px;white-space:pre;">Logic</div>
<div style="left:534px;top:286px;width:225px;height:1px;background:#e3e3e3;"></div>
<svg style="left:557px;top:269.2px;" width="12" height="12"><use href="#sigO"/></svg>
<div style="left:575.60px;top:266.00px;font:13px/17px 'Liberation Sans',sans-serif;color:#000;letter-spacing:0.342px;white-space:pre;width:31.90px;overflow:hidden;">stall_</div>
<div style="left:616.00px;top:266.00px;font:13px/17px 'Liberation Sans',sans-serif;color:#000;letter-spacing:0.658px;white-space:pre;">0</div>
<div style="left:691.00px;top:266.00px;font:13px/17px 'Liberation Sans',sans-serif;color:#000;letter-spacing:0.265px;white-space:pre;">Logic</div>
<div style="left:534px;top:308px;width:225px;height:1px;background:#e3e3e3;"></div>
<svg style="left:557px;top:291.2px;" width="12" height="12"><use href="#sigO"/></svg>
<div style="left:575.60px;top:288.00px;font:13px/17px 'Liberation Sans',sans-serif;color:#000;letter-spacing:0.342px;white-space:pre;width:31.90px;overflow:hidden;">stall_</div>
<div style="left:616.00px;top:288.00px;font:13px/17px 'Liberation Sans',sans-serif;color:#000;letter-spacing:0.658px;white-space:pre;">0</div>
<div style="left:691.00px;top:288.00px;font:13px/17px 'Liberation Sans',sans-serif;color:#000;letter-spacing:0.265px;white-space:pre;">Logic</div>
<div style="left:534px;top:330px;width:225px;height:1px;background:#e3e3e3;"></div>
<svg style="left:541.2px;top:314.8px;" width="6" height="9"><use href="#chR"/></svg>
<svg style="left:556.8px;top:313.5px;" width="13" height="11"><use href="#arrI"/></svg>
<div style="left:575.60px;top:310.00px;font:13px/17px 'Liberation Sans',sans-serif;color:#000;letter-spacing:-0.863px;white-space:pre;width:31.90px;overflow:hidden;">s_axi_</div>
<div style="left:616.00px;top:310.00px;font:13px/17px 'Liberation Sans',sans-serif;color:#000;letter-spacing:0.658px;white-space:pre;">00</div>
<div style="left:691.00px;top:310.00px;font:13px/17px 'Liberation Sans',sans-serif;color:#000;letter-spacing:0.466px;white-space:pre;">Array</div>
<div style="left:534px;top:352px;width:225px;height:1px;background:#e3e3e3;"></div>
<svg style="left:557px;top:335.2px;" width="12" height="12"><use href="#sigI"/></svg>
<div style="left:575.60px;top:332.00px;font:13px/17px 'Liberation Sans',sans-serif;color:#000;letter-spacing:-0.863px;white-space:pre;width:31.90px;overflow:hidden;">s_axi_</div>
<div style="left:616.00px;top:332.00px;font:13px/17px 'Liberation Sans',sans-serif;color:#000;letter-spacing:0.658px;white-space:pre;">0</div>
<div style="left:691.00px;top:332.00px;font:13px/17px 'Liberation Sans',sans-serif;color:#000;letter-spacing:0.265px;white-space:pre;">Logic</div>
<div style="left:534px;top:374px;width:225px;height:1px;background:#e3e3e3;"></div>
<svg style="left:557px;top:357.2px;" width="12" height="12"><use href="#sigO"/></svg>
<div style="left:575.60px;top:354.00px;font:13px/17px 'Liberation Sans',sans-serif;color:#000;letter-spacing:-0.863px;white-space:pre;width:31.90px;overflow:hidden;">s_axi_</div>
<div style="left:616.00px;top:354.00px;font:13px/17px 'Liberation Sans',sans-serif;color:#000;letter-spacing:0.658px;white-space:pre;">0</div>
<div style="left:691.00px;top:354.00px;font:13px/17px 'Liberation Sans',sans-serif;color:#000;letter-spacing:0.265px;white-space:pre;">Logic</div>
<div style="left:534px;top:396px;width:225px;height:1px;background:#e3e3e3;"></div>
<svg style="left:541.2px;top:380.8px;" width="6" height="9"><use href="#chR"/></svg>
<svg style="left:556.8px;top:379.5px;" width="13" height="11"><use href="#arrI"/></svg>
<div style="left:575.60px;top:376.00px;font:13px/17px 'Liberation Sans',sans-serif;color:#000;letter-spacing:-0.863px;white-space:pre;width:31.90px;overflow:hidden;">s_axi_</div>
<div style="left:616.00px;top:376.00px;font:13px/17px 'Liberation Sans',sans-serif;color:#000;letter-spacing:0.658px;white-space:pre;">00000000</div>
<div style="left:691.00px;top:376.00px;font:13px/17px 'Liberation Sans',sans-serif;color:#000;letter-spacing:0.466px;white-space:pre;">Array</div>
<div style="left:534px;top:418px;width:225px;height:1px;background:#e3e3e3;"></div>
<svg style="left:541.2px;top:402.8px;" width="6" height="9"><use href="#chR"/></svg>
<svg style="left:556.8px;top:401.5px;" width="13" height="11"><use href="#arrI"/></svg>
<div style="left:575.60px;top:398.00px;font:13px/17px 'Liberation Sans',sans-serif;color:#000;letter-spacing:-0.863px;white-space:pre;width:31.90px;overflow:hidden;">s_axi_</div>
<div style="left:616.00px;top:398.00px;font:13px/17px 'Liberation Sans',sans-serif;color:#000;letter-spacing:0.658px;white-space:pre;">0</div>
<div style="left:691.00px;top:398.00px;font:13px/17px 'Liberation Sans',sans-serif;color:#000;letter-spacing:0.466px;white-space:pre;">Array</div>
<div style="left:534px;top:440px;width:225px;height:1px;background:#e3e3e3;"></div>
<svg style="left:557px;top:423.2px;" width="12" height="12"><use href="#sigI"/></svg>
<div style="left:575.60px;top:420.00px;font:13px/17px 'Liberation Sans',sans-serif;color:#000;letter-spacing:-0.863px;white-space:pre;width:31.90px;overflow:hidden;">s_axi_</div>
<div style="left:616.00px;top:420.00px;font:13px/17px 'Liberation Sans',sans-serif;color:#000;letter-spacing:0.658px;white-space:pre;">0</div>
<div style="left:691.00px;top:420.00px;font:13px/17px 'Liberation Sans',sans-serif;color:#000;letter-spacing:0.265px;white-space:pre;">Logic</div>
<div style="left:534px;top:462px;width:225px;height:1px;background:#e3e3e3;"></div>
<svg style="left:557px;top:445.2px;" width="12" height="12"><use href="#sigO"/></svg>
<div style="left:575.60px;top:442.00px;font:13px/17px 'Liberation Sans',sans-serif;color:#000;letter-spacing:-0.863px;white-space:pre;width:31.90px;overflow:hidden;">s_axi_</div>
<div style="left:616.00px;top:442.00px;font:13px/17px 'Liberation Sans',sans-serif;color:#000;letter-spacing:0.658px;white-space:pre;">0</div>
<div style="left:691.00px;top:442.00px;font:13px/17px 'Liberation Sans',sans-serif;color:#000;letter-spacing:0.265px;white-space:pre;">Logic</div>
<div style="left:534px;top:484px;width:225px;height:1px;background:#e3e3e3;"></div>
<svg style="left:541.2px;top:468.8px;" width="6" height="9"><use href="#chR"/></svg>
<svg style="left:556.8px;top:467.5px;" width="13" height="11"><use href="#arrO"/></svg>
<div style="left:575.60px;top:464.00px;font:13px/17px 'Liberation Sans',sans-serif;color:#000;letter-spacing:-0.863px;white-space:pre;width:31.90px;overflow:hidden;">s_axi_</div>
<div style="left:616.00px;top:464.00px;font:13px/17px 'Liberation Sans',sans-serif;color:#000;letter-spacing:0.658px;white-space:pre;">0</div>
<div style="left:691.00px;top:464.00px;font:13px/17px 'Liberation Sans',sans-serif;color:#000;letter-spacing:0.466px;white-space:pre;">Array</div>
<div style="left:534px;top:506px;width:225px;height:1px;background:#e3e3e3;"></div>
<svg style="left:557px;top:489.2px;" width="12" height="12"><use href="#sigO"/></svg>
<div style="left:575.60px;top:486.00px;font:13px/17px 'Liberation Sans',sans-serif;color:#000;letter-spacing:-0.863px;white-space:pre;width:31.90px;overflow:hidden;">s_axi_</div>
<div style="left:616.00px;top:486.00px;font:13px/17px 'Liberation Sans',sans-serif;color:#000;letter-spacing:0.658px;white-space:pre;">0</div>
<div style="left:691.00px;top:486.00px;font:13px/17px 'Liberation Sans',sans-serif;color:#000;letter-spacing:0.265px;white-space:pre;">Logic</div>
<div style="left:534px;top:528px;width:225px;height:1px;background:#e3e3e3;"></div>
<svg style="left:557px;top:511.2px;" width="12" height="12"><use href="#sigI"/></svg>
<div style="left:575.60px;top:508.00px;font:13px/17px 'Liberation Sans',sans-serif;color:#000;letter-spacing:-0.863px;white-space:pre;width:31.90px;overflow:hidden;">s_axi_</div>
<div style="left:616.00px;top:508.00px;font:13px/17px 'Liberation Sans',sans-serif;color:#000;letter-spacing:0.658px;white-space:pre;">0</div>
<div style="left:691.00px;top:508.00px;font:13px/17px 'Liberation Sans',sans-serif;color:#000;letter-spacing:0.265px;white-space:pre;">Logic</div>
<div style="left:534px;top:550px;width:225px;height:1px;background:#e3e3e3;"></div>
<svg style="left:541.2px;top:534.8px;" width="6" height="9"><use href="#chR"/></svg>
<svg style="left:556.8px;top:533.5px;" width="13" height="11"><use href="#arrI"/></svg>
<div style="left:575.60px;top:530.00px;font:13px/17px 'Liberation Sans',sans-serif;color:#000;letter-spacing:-0.863px;white-space:pre;width:31.90px;overflow:hidden;">s_axi_</div>
<div style="left:616.00px;top:530.00px;font:13px/17px 'Liberation Sans',sans-serif;color:#000;letter-spacing:0.658px;white-space:pre;">00</div>
<div style="left:691.00px;top:530.00px;font:13px/17px 'Liberation Sans',sans-serif;color:#000;letter-spacing:0.466px;white-space:pre;">Array</div>
<div style="left:534px;top:572px;width:225px;height:1px;background:#e3e3e3;"></div>
<svg style="left:557px;top:555.2px;" width="12" height="12"><use href="#sigI"/></svg>
<div style="left:575.60px;top:552.00px;font:13px/17px 'Liberation Sans',sans-serif;color:#000;letter-spacing:-0.863px;white-space:pre;width:31.90px;overflow:hidden;">s_axi_</div>
<div style="left:616.00px;top:552.00px;font:13px/17px 'Liberation Sans',sans-serif;color:#000;letter-spacing:0.658px;white-space:pre;">0</div>
<div style="left:691.00px;top:552.00px;font:13px/17px 'Liberation Sans',sans-serif;color:#000;letter-spacing:0.265px;white-space:pre;">Logic</div>
<div style="left:534px;top:594px;width:225px;height:1px;background:#e3e3e3;"></div>
<svg style="left:557px;top:577.2px;" width="12" height="12"><use href="#sigO"/></svg>
<div style="left:575.60px;top:574.00px;font:13px/17px 'Liberation Sans',sans-serif;color:#000;letter-spacing:-0.863px;white-space:pre;width:31.90px;overflow:hidden;">s_axi_</div>
<div style="left:616.00px;top:574.00px;font:13px/17px 'Liberation Sans',sans-serif;color:#000;letter-spacing:0.658px;white-space:pre;">0</div>
<div style="left:691.00px;top:574.00px;font:13px/17px 'Liberation Sans',sans-serif;color:#000;letter-spacing:0.265px;white-space:pre;">Logic</div>
<div style="left:534px;top:616px;width:225px;height:1px;background:#e3e3e3;"></div>
<svg style="left:541.2px;top:600.8px;" width="6" height="9"><use href="#chR"/></svg>
<svg style="left:556.8px;top:599.5px;" width="13" height="11"><use href="#arrO"/></svg>
<div style="left:575.60px;top:596.00px;font:13px/17px 'Liberation Sans',sans-serif;color:#000;letter-spacing:-0.863px;white-space:pre;width:31.90px;overflow:hidden;">s_axi_</div>
<div style="left:616.00px;top:596.00px;font:13px/17px 'Liberation Sans',sans-serif;color:#000;letter-spacing:-1.547px;white-space:pre;">XXXXXXXX</div>
<div style="left:691.00px;top:596.00px;font:13px/17px 'Liberation Sans',sans-serif;color:#000;letter-spacing:0.466px;white-space:pre;">Array</div>
<div style="left:534px;top:638px;width:225px;height:1px;background:#e3e3e3;"></div>
<svg style="left:541.2px;top:622.8px;" width="6" height="9"><use href="#chR"/></svg>
<svg style="left:556.8px;top:621.5px;" width="13" height="11"><use href="#arrO"/></svg>
<div style="left:575.60px;top:618.00px;font:13px/17px 'Liberation Sans',sans-serif;color:#000;letter-spacing:-0.863px;white-space:pre;width:31.90px;overflow:hidden;">s_axi_</div>
<div style="left:616.00px;top:618.00px;font:13px/17px 'Liberation Sans',sans-serif;color:#000;letter-spacing:0.658px;white-space:pre;">0</div>
<div style="left:691.00px;top:618.00px;font:13px/17px 'Liberation Sans',sans-serif;color:#000;letter-spacing:0.466px;white-space:pre;">Array</div>
<div style="left:534px;top:660px;width:225px;height:1px;background:#e3e3e3;"></div>
<svg style="left:557px;top:643.2px;" width="12" height="12"><use href="#sigO"/></svg>
<div style="left:575.60px;top:640.00px;font:13px/17px 'Liberation Sans',sans-serif;color:#000;letter-spacing:-0.863px;white-space:pre;width:31.90px;overflow:hidden;">s_axi_</div>
<div style="left:616.00px;top:640.00px;font:13px/17px 'Liberation Sans',sans-serif;color:#000;letter-spacing:0.658px;white-space:pre;">0</div>
<div style="left:691.00px;top:640.00px;font:13px/17px 'Liberation Sans',sans-serif;color:#000;letter-spacing:0.265px;white-space:pre;">Logic</div>
<div style="left:534px;top:682px;width:225px;height:1px;background:#e3e3e3;"></div>
<svg style="left:557px;top:665.2px;" width="12" height="12"><use href="#sigI"/></svg>
<div style="left:575.60px;top:662.00px;font:13px/17px 'Liberation Sans',sans-serif;color:#000;letter-spacing:-0.863px;white-space:pre;width:31.90px;overflow:hidden;">s_axi_</div>
<div style="left:616.00px;top:662.00px;font:13px/17px 'Liberation Sans',sans-serif;color:#000;letter-spacing:0.658px;white-space:pre;">0</div>
<div style="left:691.00px;top:662.00px;font:13px/17px 'Liberation Sans',sans-serif;color:#000;letter-spacing:0.265px;white-space:pre;">Logic</div>
<div style="left:534px;top:704px;width:225px;height:1px;background:#e3e3e3;"></div>
<svg style="left:557px;top:687.2px;" width="12" height="12"><use href="#sigI"/></svg>
<div style="left:575.60px;top:684.00px;font:13px/17px 'Liberation Sans',sans-serif;color:#000;letter-spacing:0.255px;white-space:pre;width:31.90px;overflow:hidden;">ap_clk</div>
<div style="left:616.00px;top:684.00px;font:13px/17px 'Liberation Sans',sans-serif;color:#000;letter-spacing:0.658px;white-space:pre;">1</div>
<div style="left:691.00px;top:684.00px;font:13px/17px 'Liberation Sans',sans-serif;color:#000;letter-spacing:0.265px;white-space:pre;">Logic</div>
<div style="left:534px;top:726px;width:225px;height:1px;background:#e3e3e3;"></div>
<svg style="left:557px;top:709.2px;" width="12" height="12"><use href="#sigI"/></svg>
<div style="left:575.60px;top:706.00px;font:13px/17px 'Liberation Sans',sans-serif;color:#000;letter-spacing:0.193px;white-space:pre;width:31.90px;overflow:hidden;">ap_rst_n</div>
<div style="left:616.00px;top:706.00px;font:13px/17px 'Liberation Sans',sans-serif;color:#000;letter-spacing:0.658px;white-space:pre;">0</div>
<div style="left:691.00px;top:706.00px;font:13px/17px 'Liberation Sans',sans-serif;color:#000;letter-spacing:0.265px;white-space:pre;">Logic</div>
<svg style="left:557px;top:731.2px;" width="12" height="12"><use href="#sigO"/></svg>
<div style="left:575.60px;top:728.00px;font:13px/17px 'Liberation Sans',sans-serif;color:#000;letter-spacing:0.450px;white-space:pre;width:31.90px;overflow:hidden;">event_done</div>
<div style="left:616.00px;top:728.00px;font:13px/17px 'Liberation Sans',sans-serif;color:#000;letter-spacing:0.658px;white-space:pre;">0</div>
<div style="left:691.00px;top:728.00px;font:13px/17px 'Liberation Sans',sans-serif;color:#000;letter-spacing:0.265px;white-space:pre;">Logic</div>
<div style="left:608px;top:177px;width:1px;height:572px;background:#e3e3e3;"></div>
<div style="left:683px;top:177px;width:1px;height:572px;background:#e3e3e3;"></div>
<div style="left:758px;top:177px;width:1px;height:572px;background:#e3e3e3;"></div>
<div style="left:785px;top:155px;width:13px;height:594px;background:#fafafa;"></div>
<svg style="left:785.7px;top:160.3px;" width="11.6" height="7.7"><use href="#sbU"/></svg>
<svg style="left:785.7px;top:739.3px;" width="11.6" height="7.7"><use href="#sbD"/></svg>
<div style="left:787px;top:173px;width:8px;height:212px;background:#bdbdbd;border-radius:4px;"></div>
<div style="left:534px;top:154px;width:264px;height:2px;background:#e6e6e6;"></div>
<div style="left:814px;top:92px;width:564px;height:660px;background:#4472c4;"></div>
<div style="left:815px;top:93px;width:562px;height:658px;background:#4472c4;"></div>
<div style="left:817px;top:95px;width:558px;height:654px;background:#fff;"></div>
<div style="left:817px;top:95px;width:558px;height:27px;background:#ebebeb;"></div>
<div style="left:823.00px;top:99.00px;font:bold 13px/17px 'Liberation Sans',sans-serif;color:#000;letter-spacing:0.848px;white-space:pre;-webkit-text-stroke:0.300px currentColor;">dr_behav.wcfg*</div>
<div style="left:1296.00px;top:98.48px;font:bold 14.5px/19px 'Liberation Sans',sans-serif;color:#8c8c8c;letter-spacing:0.643px;white-space:pre;-webkit-text-stroke:0.300px currentColor;">?</div>
<svg style="left:1315px;top:102px;" width="12" height="12"><use href="#wmax"/></svg>
<svg style="left:1335px;top:102px;" width="12" height="12"><use href="#wpop"/></svg>
<svg style="left:1355px;top:102px;" width="12" height="12"><use href="#wx"/></svg>
<svg style="left:826px;top:130px;" width="16" height="16"><use href="#search"/></svg>
<svg style="left:861px;top:130px;" width="16" height="16" viewBox="0 0 16 16"><path d="M1 1.500h12.500L15 3v11.500H1z" fill="#2c4a8c"/><rect x="4.500" y="1.500" width="6.500" height="4.500" fill="#fff"/><rect x="8" y="2.300" width="2" height="3" fill="#2c4a8c"/></svg>
<svg style="left:896px;top:130px;" width="16" height="16" viewBox="0 0 16 16"><circle cx="6.700" cy="6.700" r="5.100" fill="none" stroke="#2c4a8c" stroke-width="1.700"/><path d="M11.100 11.100l2.100 2.100" stroke="#2c4a8c" stroke-width="3" stroke-linecap="round"/><path d="M4 6.700h5.400M6.700 4v5.400" stroke="#2c4a8c" stroke-width="1.700"/></svg>
<svg style="left:931px;top:130px;" width="16" height="16" viewBox="0 0 16 16"><circle cx="6.700" cy="6.700" r="5.100" fill="none" stroke="#2c4a8c" stroke-width="1.700"/><path d="M11.100 11.100l2.100 2.100" stroke="#2c4a8c" stroke-width="3" stroke-linecap="round"/><path d="M4 6.700h5.400" stroke="#2c4a8c" stroke-width="1.700"/></svg>
<svg style="left:967px;top:131px;" width="14" height="14" viewBox="0 0 14 14"><g fill="#2c4a8c" stroke="#2c4a8c" stroke-width="2.200"><path d="M0 0h5.200L0 5.200z" stroke="none"/><path d="M2 2l3.800 3.800"/><path d="M14 0v5.200L8.800 0z" stroke="none"/><path d="M12 2L8.200 5.800"/><path d="M0 14V8.800L5.200 14z" stroke="none"/><path d="M2 12l3.800-3.800"/><path d="M14 14H8.800L14 8.800z" stroke="none"/><path d="M12 12L8.200 8.200"/></g></svg>
<svg style="left:1001px;top:130px;" width="16" height="16" viewBox="0 0 16 16"><path d="M0.700 6.200h4.300V3.800l4.300 4.300-4.300 4.300V10H0.700z" fill="#2c4a8c"/><path d="M10.600 15V2.200h4.600" fill="none" stroke="#e6c45c" stroke-width="2.600"/></svg>
<svg style="left:1037px;top:131px;" width="14" height="14" viewBox="0 0 14 14"><rect x="1" y="0.500" width="2.600" height="13" fill="#2c4a8c"/><path d="M13 0.500v13L5 7z" fill="#2c4a8c"/></svg>
<svg style="left:1072px;top:131px;" width="14" height="14" viewBox="0 0 14 14"><rect x="10.400" y="0.500" width="2.600" height="13" fill="#2c4a8c"/><path d="M1 0.500v13L9 7z" fill="#2c4a8c"/></svg>
<svg style="left:1106px;top:130px;" width="16" height="16" viewBox="0 0 16 16"><path d="M15 3.600h-3.500V1L6.500 5.300l5 4.300V7h3.500z" fill="#bdbdbd"/><path d="M0.500 8.300h4.800V13.200H15" fill="none" stroke="#bdbdbd" stroke-width="2.400"/></svg>
<svg style="left:1141px;top:130px;" width="16" height="16" viewBox="0 0 16 16"><path d="M1 3.600h3.500V1l5 4.300-5 4.300V7H1z" fill="#bdbdbd"/><path d="M1 13.200h9.700V8.300h4.800" fill="none" stroke="#bdbdbd" stroke-width="2.400"/></svg>
<svg style="left:1176px;top:130px;" width="16" height="16" viewBox="0 0 16 16"><path d="M0.800 8h7M4.300 4.500v7" stroke="#2fa336" stroke-width="2.200"/><path d="M10.200 15V2.200h5" fill="none" stroke="#2a6cb0" stroke-width="2.600"/></svg>
<svg style="left:1211px;top:130px;" width="16" height="16" viewBox="0 0 16 16"><path d="M2 15V2.200h5" fill="none" stroke="#bdbdbd" stroke-width="2.600"/><path d="M15.300 8.200H11V5.800l-4.300 4.300 4.300 4.300V12h4.300z" fill="#bdbdbd"/></svg>
<svg style="left:1246px;top:130px;" width="16" height="16" viewBox="0 0 16 16"><path d="M0.700 8.200h4.300V5.800l4.300 4.300-4.300 4.300V12H0.700z" fill="#bdbdbd"/><path d="M10.800 15V2.200h4.600" fill="none" stroke="#bdbdbd" stroke-width="2.600"/></svg>
<svg style="left:1281px;top:130px;" width="16" height="16" viewBox="0 0 16 16"><path d="M2 1.500v13M14 1.500v13" stroke="#bdbdbd" stroke-width="2.200"/><path d="M4 8h8M6 6L4 8l2 2M10 6l2 2-2 2" fill="none" stroke="#bdbdbd" stroke-width="1"/></svg>
<div style="left:851px;top:128px;width:1px;height:21px;background:#dcdcdc;"></div>
<div style="left:886px;top:128px;width:1px;height:21px;background:#dcdcdc;"></div>
<div style="left:921px;top:128px;width:1px;height:21px;background:#dcdcdc;"></div>
<div style="left:956px;top:128px;width:1px;height:21px;background:#dcdcdc;"></div>
<div style="left:991px;top:128px;width:1px;height:21px;background:#dcdcdc;"></div>
<div style="left:1026px;top:128px;width:1px;height:21px;background:#dcdcdc;"></div>
<div style="left:1061px;top:128px;width:1px;height:21px;background:#dcdcdc;"></div>
<div style="left:1096px;top:128px;width:1px;height:21px;background:#dcdcdc;"></div>
<div style="left:1131px;top:128px;width:1px;height:21px;background:#dcdcdc;"></div>
<div style="left:1166px;top:128px;width:1px;height:21px;background:#dcdcdc;"></div>
<div style="left:1201px;top:128px;width:1px;height:21px;background:#dcdcdc;"></div>
<div style="left:1236px;top:128px;width:1px;height:21px;background:#dcdcdc;"></div>
<div style="left:1271px;top:128px;width:1px;height:21px;background:#dcdcdc;"></div>
<div style="left:1306px;top:128px;width:1px;height:21px;background:#dcdcdc;"></div>
<svg style="left:1350px;top:130px;" width="16" height="16"><use href="#gear"/></svg>
<div style="left:817px;top:154px;width:558px;height:2px;background:#ececec;"></div>
<div style="left:817px;top:156px;width:346px;height:593px;background:#000;"></div>
<div style="left:1167px;top:156px;width:193px;height:578px;background:#000;"></div>
<div style="left:1093px;top:183px;width:4px;height:566px;background:#fff;"></div>
<div style="left:1163px;top:156px;width:4px;height:593px;background:#fff;"></div>
<div style="left:817px;top:183px;width:276px;height:29px;background:linear-gradient(#fbfbfb,#f1f1f1 40%,#dcdcdc);"></div>
<div style="left:1097px;top:183px;width:66px;height:29px;background:linear-gradient(#fbfbfb,#f1f1f1 40%,#dcdcdc);"></div>
<div style="left:832.00px;top:189.00px;font:bold 13px/17px 'Liberation Sans',sans-serif;color:#000;letter-spacing:1.398px;white-space:pre;-webkit-text-stroke:0.300px currentColor;">Name</div>
<div style="left:1111.50px;top:189.00px;font:bold 13px/17px 'Liberation Sans',sans-serif;color:#000;letter-spacing:1.506px;white-space:pre;-webkit-text-stroke:0.300px currentColor;">Value</div>
<div style="left:1097px;top:734px;width:66px;height:15px;background:#fafafa;"></div>
<svg style="left:1101px;top:736px;" width="8" height="12"><use href="#sbL"/></svg>
<svg style="left:1153px;top:736px;" width="8" height="12"><use href="#sbR"/></svg>
<div style="left:1167px;top:734px;width:208px;height:15px;background:#fafafa;"></div>
<svg style="left:1171px;top:736px;" width="8" height="12"><use href="#sbL"/></svg>
<svg style="left:1365px;top:736px;" width="8" height="12"><use href="#sbR"/></svg>
<div style="left:1302px;top:738px;width:56px;height:8px;background:#bdbdbd;border-radius:4px;"></div>
<div style="left:1360px;top:156px;width:15px;height:578px;background:#fafafa;"></div>
<svg style="left:1363px;top:160px;" width="12" height="8"><use href="#sbU"/></svg>
<svg style="left:1363px;top:724px;" width="12" height="8"><use href="#sbD"/></svg>
<div style="left:1364px;top:173px;width:8px;height:148px;background:#bdbdbd;border-radius:4px;"></div>
<div style="left:817px;top:212px;width:346px;height:483px;overflow:hidden">
<svg style="left:8.200000000000045px;top:8.0px;" width="9" height="6"><use href="#chDw"/></svg>
<svg style="left:23px;top:5.0px;" width="12" height="12"><use href="#grp"/></svg>
<div style="left:39.80px;top:2.50px;font:13px/17px 'Liberation Sans',sans-serif;color:#ffffff;letter-spacing:0.232px;white-space:pre;width:235.70px;overflow:hidden;">HLS Process Summary</div>
<svg style="left:8.200000000000045px;top:30.0px;" width="9" height="6"><use href="#chDw"/></svg>
<svg style="left:23px;top:27.0px;" width="12" height="12"><use href="#grp"/></svg>
<div style="left:39.80px;top:24.50px;font:13px/17px 'Liberation Sans',sans-serif;color:#ffffff;letter-spacing:0.061px;white-space:pre;width:235.70px;overflow:hidden;">Device "xilinx_zcu...zcu104_base_1_0-0</div>
<svg style="left:30.200000000000045px;top:52.0px;" width="9" height="6"><use href="#chDw"/></svg>
<svg style="left:45px;top:49.0px;" width="12" height="12"><use href="#grp"/></svg>
<div style="left:61.80px;top:46.50px;font:13px/17px 'Liberation Sans',sans-serif;color:#ffffff;letter-spacing:0.300px;white-space:pre;width:213.70px;overflow:hidden;">Binary Container ...ary_container_1</div>
<svg style="left:52.200000000000045px;top:74.0px;" width="9" height="6"><use href="#chDw"/></svg>
<svg style="left:67px;top:71.0px;" width="12" height="12"><use href="#grp"/></svg>
<div style="left:83.80px;top:68.50px;font:13px/17px 'Liberation Sans',sans-serif;color:#ffffff;letter-spacing:0.341px;white-space:pre;width:191.70px;overflow:hidden;">Kernel "krnl_vadd" 1:1:1</div>
<svg style="left:74.20000000000005px;top:96.0px;" width="9" height="6"><use href="#chDw"/></svg>
<svg style="left:89px;top:93.0px;" width="12" height="12"><use href="#grp"/></svg>
<div style="left:105.80px;top:90.50px;font:13px/17px 'Liberation Sans',sans-serif;color:#ffffff;letter-spacing:0.319px;white-space:pre;width:169.70px;overflow:hidden;">Compute Unit: krnl_vadd_1</div>
<svg style="left:97.70000000000005px;top:116.5px;" width="6" height="9"><use href="#chRw"/></svg>
<div style="left:111.70px;top:112.50px;font:13px/17px 'Liberation Sans',sans-serif;color:#ffffff;letter-spacing:0.211px;white-space:pre;width:163.80px;overflow:hidden;">CU Stalls (%)</div>
<div style="left:287.50px;top:112.50px;font:13px/17px 'Liberation Sans',sans-serif;color:#ffffff;letter-spacing:0.505px;white-space:pre;width:58.50px;overflow:hidden;">0.00%</div>
<svg style="left:96.20000000000005px;top:140.0px;" width="9" height="6"><use href="#chDw"/></svg>
<svg style="left:111px;top:137.0px;" width="12" height="12"><use href="#grp"/></svg>
<div style="left:127.80px;top:134.50px;font:13px/17px 'Liberation Sans',sans-serif;color:#ffffff;letter-spacing:0.329px;white-space:pre;width:147.70px;overflow:hidden;">Data Transfers</div>
<svg style="left:119.5px;top:167.5px;" width="6" height="9"><use href="#chRw"/></svg>
<svg style="left:132.5px;top:166.0px;" width="13" height="12" viewBox="0 0 13 12"><rect x="0.300" y="0.800" width="2" height="10.800" fill="#4f74ad"/><rect x="3.200" y="1.500" width="5.800" height="9.200" fill="#b9d3e6"/><path d="M9 6h3.300" stroke="#5f86b8" stroke-width="1.600"/></svg>
<div style="left:149.40px;top:163.50px;font:13px/17px 'Liberation Sans',sans-serif;color:#ffffff;letter-spacing:0.097px;white-space:pre;width:126.10px;overflow:hidden;">m_axi_gmem</div>
<svg style="left:9.700000000000045px;top:196.5px;" width="6" height="9"><use href="#chRw"/></svg>
<div style="left:22px;top:190px;width:53px;height:22px;background:#cddffe;"></div>
<svg style="left:23px;top:195.0px;" width="12" height="12" viewBox="0 0 12 12"><path d="M0.500 0.500h1M10.500 0.500h1M0.500 11.500h1M10.500 11.500h1" stroke="#777"/><rect x="1.500" y="2" width="6.500" height="5.500" fill="#8fb9c9" stroke="#5f8fa3"/><rect x="4" y="4.500" width="6.500" height="5.500" fill="#a9cdd9" stroke="#5f8fa3"/></svg>
<div style="left:39.00px;top:192.50px;font:13px/17px 'Liberation Sans',sans-serif;color:#4a4a4a;letter-spacing:0.213px;white-space:pre;">VAdd</div>
<svg style="left:22.600000000000023px;top:216.8px;" width="11.5" height="11.5"><use href="#sigO"/></svg>
<div style="left:39.80px;top:214.50px;font:13px/17px 'Liberation Sans',sans-serif;color:#ffffff;letter-spacing:0.433px;white-space:pre;width:235.70px;overflow:hidden;">stall_start_ext</div>
<svg style="left:22.600000000000023px;top:238.8px;" width="11.5" height="11.5"><use href="#sigO"/></svg>
<div style="left:39.80px;top:236.50px;font:13px/17px 'Liberation Sans',sans-serif;color:#ffffff;letter-spacing:0.351px;white-space:pre;width:235.70px;overflow:hidden;">stall_done_ext</div>
<svg style="left:22.600000000000023px;top:260.8px;" width="11.5" height="11.5"><use href="#sigO"/></svg>
<div style="left:39.80px;top:258.50px;font:13px/17px 'Liberation Sans',sans-serif;color:#ffffff;letter-spacing:0.413px;white-space:pre;width:235.70px;overflow:hidden;">stall_start_str</div>
<svg style="left:22.600000000000023px;top:282.8px;" width="11.5" height="11.5"><use href="#sigO"/></svg>
<div style="left:39.80px;top:280.50px;font:13px/17px 'Liberation Sans',sans-serif;color:#ffffff;letter-spacing:0.330px;white-space:pre;width:235.70px;overflow:hidden;">stall_done_str</div>
<svg style="left:22.600000000000023px;top:304.79999999999995px;" width="11.5" height="11.5"><use href="#sigO"/></svg>
<div style="left:39.80px;top:302.50px;font:13px/17px 'Liberation Sans',sans-serif;color:#ffffff;letter-spacing:0.444px;white-space:pre;width:235.70px;overflow:hidden;">stall_start_int</div>
<svg style="left:22.600000000000023px;top:326.79999999999995px;" width="11.5" height="11.5"><use href="#sigO"/></svg>
<div style="left:39.80px;top:324.50px;font:13px/17px 'Liberation Sans',sans-serif;color:#ffffff;letter-spacing:0.363px;white-space:pre;width:235.70px;overflow:hidden;">stall_done_int</div>
<svg style="left:9.700000000000045px;top:350.5px;" width="6" height="9"><use href="#chRw"/></svg>
<svg style="left:22.799999999999955px;top:349.20000000000005px;" width="12.2" height="10.3"><use href="#arrI"/></svg>
<div style="left:39.80px;top:346.50px;font:13px/17px 'Liberation Sans',sans-serif;color:#ffffff;letter-spacing:0.062px;white-space:pre;width:235.70px;overflow:hidden;">s_axi_control_AWADDR[5:0]</div>
<div style="left:287.50px;top:346.50px;font:13px/17px 'Liberation Sans',sans-serif;color:#ffffff;letter-spacing:0.658px;white-space:pre;width:58.50px;overflow:hidden;">00</div>
<svg style="left:22.600000000000023px;top:370.79999999999995px;" width="11.5" height="11.5"><use href="#sigI"/></svg>
<div style="left:39.80px;top:368.50px;font:13px/17px 'Liberation Sans',sans-serif;color:#ffffff;letter-spacing:-0.138px;white-space:pre;width:235.70px;overflow:hidden;">s_axi_control_AWVALID</div>
<div style="left:287.50px;top:368.50px;font:13px/17px 'Liberation Sans',sans-serif;color:#ffffff;letter-spacing:0.658px;white-space:pre;width:58.50px;overflow:hidden;">0</div>
<svg style="left:22.600000000000023px;top:392.79999999999995px;" width="11.5" height="11.5"><use href="#sigO"/></svg>
<div style="left:39.80px;top:390.50px;font:13px/17px 'Liberation Sans',sans-serif;color:#ffffff;letter-spacing:-0.218px;white-space:pre;width:235.70px;overflow:hidden;">s_axi_control_AWREADY</div>
<div style="left:287.50px;top:390.50px;font:13px/17px 'Liberation Sans',sans-serif;color:#ffffff;letter-spacing:0.658px;white-space:pre;width:58.50px;overflow:hidden;">0</div>
<svg style="left:9.700000000000045px;top:416.5px;" width="6" height="9"><use href="#chRw"/></svg>
<svg style="left:22.799999999999955px;top:415.20000000000005px;" width="12.2" height="10.3"><use href="#arrI"/></svg>
<div style="left:39.80px;top:412.50px;font:13px/17px 'Liberation Sans',sans-serif;color:#ffffff;letter-spacing:0.165px;white-space:pre;width:235.70px;overflow:hidden;">s_axi_control_WDATA[31:0]</div>
<div style="left:287.50px;top:412.50px;font:13px/17px 'Liberation Sans',sans-serif;color:#ffffff;letter-spacing:0.658px;white-space:pre;width:58.50px;overflow:hidden;">00000000</div>
<svg style="left:9.700000000000045px;top:438.5px;" width="6" height="9"><use href="#chRw"/></svg>
<svg style="left:22.799999999999955px;top:437.20000000000005px;" width="12.2" height="10.3"><use href="#arrI"/></svg>
<div style="left:39.80px;top:434.50px;font:13px/17px 'Liberation Sans',sans-serif;color:#ffffff;letter-spacing:0.018px;white-space:pre;width:235.70px;overflow:hidden;">s_axi_control_WSTRB[3:0]</div>
<div style="left:287.50px;top:434.50px;font:13px/17px 'Liberation Sans',sans-serif;color:#ffffff;letter-spacing:0.658px;white-space:pre;width:58.50px;overflow:hidden;">0</div>
<svg style="left:22.600000000000023px;top:458.79999999999995px;" width="11.5" height="11.5"><use href="#sigI"/></svg>
<div style="left:39.80px;top:456.50px;font:13px/17px 'Liberation Sans',sans-serif;color:#ffffff;letter-spacing:-0.146px;white-space:pre;width:235.70px;overflow:hidden;">s_axi_control_WVALID</div>
<div style="left:287.50px;top:456.50px;font:13px/17px 'Liberation Sans',sans-serif;color:#ffffff;letter-spacing:0.658px;white-space:pre;width:58.50px;overflow:hidden;">0</div>
<svg style="left:22.600000000000023px;top:480.79999999999995px;" width="11.5" height="11.5"><use href="#sigO"/></svg>
<div style="left:39.80px;top:478.50px;font:13px/17px 'Liberation Sans',sans-serif;color:#ffffff;letter-spacing:-0.195px;white-space:pre;width:235.70px;overflow:hidden;">s_axi_control_WREADY</div>
<div style="left:287.50px;top:478.50px;font:13px/17px 'Liberation Sans',sans-serif;color:#ffffff;letter-spacing:0.658px;white-space:pre;width:58.50px;overflow:hidden;">0</div>
<div style="left:284px;top:190px;width:62px;height:22px;background:#cddffe;box-sizing:border-box;border:1px solid #5aa2ea;border-right:none;"></div>
<div style="left:276px;top:0px;width:4px;height:483px;background:#fff;"></div>
</div>
<div style="left:817px;top:695px;width:276px;height:1px;background:#fff;"></div>
<div style="left:1097px;top:695px;width:66px;height:1px;background:#fff;"></div>
<div style="left:1170px;top:696px;width:189px;height:1px;background:#fff;"></div>
<div style="left:1170px;top:212px;width:189px;height:1px;background:#fff;"></div>
<div style="left:1171px;top:208px;width:1px;height:4px;background:#fff;"></div>
<div style="left:1181px;top:208px;width:1px;height:4px;background:#fff;"></div>
<div style="left:1191px;top:208px;width:1px;height:4px;background:#fff;"></div>
<div style="left:1211px;top:208px;width:1px;height:4px;background:#fff;"></div>
<div style="left:1221px;top:208px;width:1px;height:4px;background:#fff;"></div>
<div style="left:1231px;top:208px;width:1px;height:4px;background:#fff;"></div>
<div style="left:1241px;top:208px;width:1px;height:4px;background:#fff;"></div>
<div style="left:1251px;top:208px;width:1px;height:4px;background:#fff;"></div>
<div style="left:1261px;top:208px;width:1px;height:4px;background:#fff;"></div>
<div style="left:1271px;top:208px;width:1px;height:4px;background:#fff;"></div>
<div style="left:1281px;top:208px;width:1px;height:4px;background:#fff;"></div>
<div style="left:1291px;top:208px;width:1px;height:4px;background:#fff;"></div>
<div style="left:1311px;top:208px;width:1px;height:4px;background:#fff;"></div>
<div style="left:1321px;top:208px;width:1px;height:4px;background:#fff;"></div>
<div style="left:1331px;top:208px;width:1px;height:4px;background:#fff;"></div>
<div style="left:1341px;top:208px;width:1px;height:4px;background:#fff;"></div>
<div style="left:1351px;top:208px;width:1px;height:4px;background:#fff;"></div>
<div style="left:1201px;top:196px;width:1px;height:17px;background:#e8e8e8;"></div>
<div style="left:1201px;top:213px;width:1px;height:483px;background:#9a9a9a;"></div>
<div style="left:1301px;top:196px;width:1px;height:17px;background:#e8e8e8;"></div>
<div style="left:1301px;top:213px;width:1px;height:483px;background:#9a9a9a;"></div>
<div style="left:1203.50px;top:191.46px;font:11.4px/15px 'Liberation Mono',monospace;color:#f2f2f2;letter-spacing:0.035px;white-space:pre;">1,000 ps</div>
<div style="left:1303.50px;top:191.46px;font:11.4px/15px 'Liberation Mono',monospace;color:#f2f2f2;letter-spacing:0.035px;white-space:pre;">1,200 ps</div>
<div style="left:1170px;top:334px;width:31px;height:1px;background:#e8742c;"></div>
<div style="left:1170px;top:385px;width:31px;height:1px;background:#22b8a6;"></div>
<svg style="left:1168px;top:556px;" width="36" height="22" viewBox="0 0 36 22"><path d="M2 4.500h27.500l4 8-4 8H2" fill="none" stroke="#14e014" stroke-width="1.150"/></svg>
<div style="left:1176.50px;top:560.26px;font:11.4px/15px 'Liberation Mono',monospace;color:#fff;letter-spacing:0.060px;white-space:pre;-webkit-text-stroke:0.150px currentColor;">00</div>
<svg style="left:1168px;top:623px;" width="36" height="22" viewBox="0 0 36 22"><path d="M2 4.500h27.500l4 8-4 8H2" fill="none" stroke="#14e014" stroke-width="1.150"/></svg>
<div style="left:1173.80px;top:626.96px;font:11.4px/15px 'Liberation Mono',monospace;color:#fff;letter-spacing:0.060px;white-space:pre;-webkit-text-stroke:0.150px currentColor;">..</div>
<svg style="left:1168px;top:645px;" width="36" height="22" viewBox="0 0 36 22"><path d="M2 4.500h27.500l4 8-4 8H2" fill="none" stroke="#14e014" stroke-width="1.150"/></svg>
<div style="left:1180.30px;top:648.46px;font:11.4px/15px 'Liberation Mono',monospace;color:#fff;letter-spacing:0.060px;white-space:pre;-webkit-text-stroke:0.150px currentColor;">0</div>
<div style="left:1170px;top:599px;width:32px;height:1px;background:#14e014;"></div>
<div style="left:1170px;top:621px;width:32px;height:1px;background:#14e014;"></div>
<div style="left:1170px;top:687px;width:32px;height:1px;background:#14e014;"></div>
<div style="left:1189px;top:157px;width:3px;height:541px;background:#ffff00;"></div>
<div style="left:1190px;top:157px;width:46px;height:15px;background:#ffff00;"></div>
<div style="left:1192.00px;top:156.46px;font:11.4px/15px 'Liberation Mono',monospace;color:#000;letter-spacing:-0.007px;white-space:pre;-webkit-text-stroke:0.250px currentColor;">978 ps</div>
<div style="left:9px;top:765px;width:1369px;height:195px;background:#c9c9c9;"></div>
<div style="left:10px;top:766px;width:1367px;height:193px;background:#e4e4e4;"></div>
<div style="left:12px;top:768px;width:1363px;height:189px;background:#fff;"></div>
<div style="left:12px;top:768px;width:1363px;height:27px;background:#ebebeb;"></div>
<div style="left:12px;top:768px;width:122px;height:27px;background:#fff;"></div>
<div style="left:18.50px;top:772.00px;font:bold 13px/17px 'Liberation Sans',sans-serif;color:#000;letter-spacing:0.662px;white-space:pre;-webkit-text-stroke:0.300px currentColor;">Tcl Console</div>
<svg style="left:119px;top:777.2px;" width="9" height="9"><use href="#tabx"/></svg>
<div style="left:140.00px;top:772.00px;font:bold 13px/17px 'Liberation Sans',sans-serif;color:#8e8e8e;letter-spacing:1.293px;white-space:pre;-webkit-text-stroke:0.300px currentColor;">Messages</div>
<div style="left:227px;top:768px;width:1px;height:23px;background:#c9c9c9;"></div>
<div style="left:1296.00px;top:771.48px;font:bold 14.5px/19px 'Liberation Sans',sans-serif;color:#8c8c8c;letter-spacing:0.643px;white-space:pre;-webkit-text-stroke:0.300px currentColor;">?</div>
<svg style="left:1315px;top:775px;" width="12" height="12"><use href="#wmin"/></svg>
<svg style="left:1335px;top:775px;" width="12" height="12"><use href="#wmax"/></svg>
<svg style="left:1355px;top:775px;" width="12" height="12"><use href="#wpop"/></svg>
<svg style="left:21px;top:803px;" width="16" height="16"><use href="#search"/></svg>
<svg style="left:56px;top:803px;" width="16" height="16"><use href="#collapse"/></svg>
<svg style="left:91px;top:803px;" width="16" height="16"><use href="#expand"/></svg>
<svg style="left:127px;top:803px;" width="14" height="16" viewBox="0 0 14 16"><rect x="2" y="1" width="3.300" height="14" fill="#2c4a8c"/><rect x="8.500" y="1" width="3.300" height="14" fill="#2c4a8c"/></svg>
<svg style="left:161px;top:803px;" width="16" height="16" viewBox="0 0 16 16"><rect x="2" y="1" width="9.700" height="11.300" fill="#2c4a8c"/><rect x="4.600" y="3.800" width="9" height="10.600" fill="#fff" stroke="#2c4a8c" stroke-width="1"/><path d="M6.400 7.500h5.500M6.400 9.500h5.500M6.400 11.500h5.500" stroke="#2c4a8c" stroke-width="1"/></svg>
<svg style="left:196px;top:803px;" width="16" height="16" viewBox="0 0 16 16"><rect x="1.200" y="1.100" width="13.700" height="13.700" fill="#fff"/><rect x="1.200" y="1.100" width="13.700" height="2" fill="#2c4a8c"/><rect x="6" y="3" width="4.200" height="11.800" fill="#4b6fc2"/><path d="M1.700 1.100v13.700M14.400 1.100v13.700M5.700 3v11.800M10.500 3v11.800" stroke="#2c4a8c" stroke-width="1"/><path d="M1.200 6.600h4.800M1.200 10.400h4.800M1.200 14.300h4.800M10.200 6.600h4.700M10.200 10.400h4.700M10.200 14.300h4.700" stroke="#2c4a8c" stroke-width="1"/></svg>
<svg style="left:231px;top:803px;" width="16" height="16" viewBox="0 0 16 16"><path d="M2.200 3.600h11.600" stroke="#2c4a8c" stroke-width="1.800"/><path d="M6.300 1.900h3.400" stroke="#2c4a8c" stroke-width="1.400"/><path d="M3.200 4.900h9.600v9.900H3.200z" fill="#2c4a8c"/><path d="M6.500 6.800v6M9.500 6.800v6" stroke="#fff" stroke-width="1.200"/></svg>
<div style="left:46px;top:801px;width:1px;height:21px;background:#dcdcdc;"></div>
<div style="left:81px;top:801px;width:1px;height:21px;background:#dcdcdc;"></div>
<div style="left:116px;top:801px;width:1px;height:21px;background:#dcdcdc;"></div>
<div style="left:151px;top:801px;width:1px;height:21px;background:#dcdcdc;"></div>
<div style="left:186px;top:801px;width:1px;height:21px;background:#dcdcdc;"></div>
<div style="left:221px;top:801px;width:1px;height:21px;background:#dcdcdc;"></div>
<div style="left:256px;top:801px;width:1px;height:21px;background:#dcdcdc;"></div>
<div style="left:12px;top:827px;width:1363px;height:2px;background:#e6e6e6;"></div>
<svg style="left:18px;top:829px;" width="14" height="86" viewBox="0 0 14 86"><path d="M6.500 0v85" stroke="#8c8c8c" stroke-width="1" stroke-dasharray="3 3"/><rect x="1.500" y="32.500" width="10" height="10.500" rx="4" fill="#fff" stroke="#9a9a9a"/><path d="M4 38h5" stroke="#777"/></svg>
<div style="left:37.30px;top:829.28px;font:12.1px/16px 'Liberation Mono',monospace;color:#111;letter-spacing:-0.282px;white-space:pre;-webkit-text-stroke:0.250px currentColor;">##   }</div>
<div style="left:37.30px;top:844.38px;font:12.1px/16px 'Liberation Mono',monospace;color:#111;letter-spacing:-0.282px;white-space:pre;-webkit-text-stroke:0.250px currentColor;">##   quit</div>
<div style="left:37.30px;top:859.48px;font:12.1px/16px 'Liberation Mono',monospace;color:#111;letter-spacing:-0.282px;white-space:pre;-webkit-text-stroke:0.250px currentColor;">## }</div>
<div style="left:37.30px;top:874.58px;font:12.1px/16px 'Liberation Mono',monospace;color:#2866f2;letter-spacing:-0.282px;white-space:pre;-webkit-text-stroke:0.250px currentColor;">create_wave_config</div>
<div style="left:37px;top:915px;width:1315px;height:13px;background:#f7f7f7;"></div>
<svg style="left:41px;top:915.5px;" width="8" height="12"><use href="#sbL"/></svg>
<svg style="left:1340px;top:915.5px;" width="8" height="12"><use href="#sbR"/></svg>
<div style="left:54px;top:917.5px;width:777px;height:7.5px;background:#bdbdbd;border-radius:4px;"></div>
<div style="left:1352px;top:829px;width:13px;height:86px;background:#fafafa;"></div>
<svg style="left:1352.5px;top:832px;" width="12" height="8"><use href="#sbU"/></svg>
<svg style="left:1352.5px;top:903px;" width="12" height="8"><use href="#sbD"/></svg>
<div style="left:1354px;top:863px;width:8px;height:33.5px;background:#bdbdbd;border-radius:4px;"></div>
<div style="left:15px;top:932px;width:1357px;height:22px;background:#fff;border:1px solid #b8b8b8;box-sizing:border-box;"></div>
<div style="left:22.50px;top:934.78px;font:12.1px/16px 'Liberation Mono',monospace;color:#8a8a8a;letter-spacing:-0.322px;white-space:pre;-webkit-text-stroke:0.250px currentColor;">Type a Tcl command here</div>
<div style="left:0px;top:963px;width:1387px;height:19px;background:#ececec;"></div>
<div style="left:0px;top:982px;width:1387px;height:5px;background:linear-gradient(#b4b4b4,#cfcfcf 60%,#e0e0e0);"></div>
<div style="left:1274.00px;top:964.00px;font:13px/17px 'Liberation Sans',sans-serif;color:#0a0a0a;letter-spacing:0.427px;white-space:pre;">Sim Time: 1 ns</div>
<div style="left:0px;top:0px;width:3px;height:987px;background:#c6c6c6;"></div>
</body></html>
